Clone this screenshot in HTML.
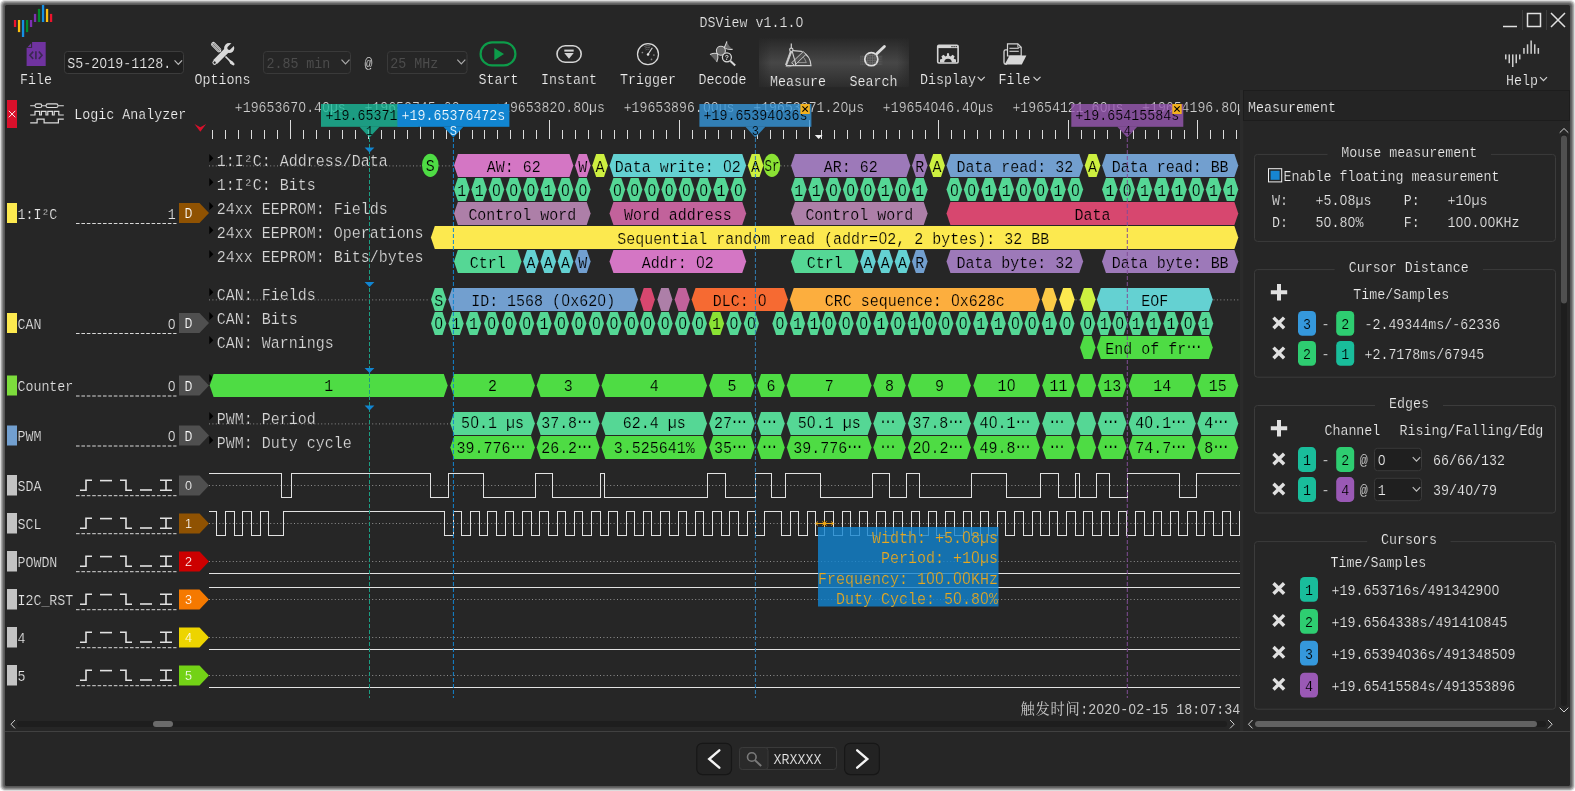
<!DOCTYPE html>
<html lang="en">
<head>
<meta charset="utf-8">
<title>DSView v1.1.0</title>
<style>
html,body{margin:0;padding:0;background:#ffffff;}
body{width:1575px;height:791px;overflow:hidden;position:relative;font-family:"Liberation Mono","DejaVu Sans Mono",monospace;}
#win{position:absolute;left:5px;top:5px;width:1565px;height:781px;background:#262626;border-radius:1.5px;
box-shadow:0 0 0 1px #575757,0 0 0 2px #666666,0 0 0 3px #868686,0 0 0 4px #a8a8a8,0 0 0 5px #dcdcdc;}
svg{position:absolute;left:0;top:0;will-change:transform;font-family:"Liberation Mono","DejaVu Sans Mono",monospace;}
text{white-space:pre;}
</style>
</head>
<body>
<div id="win"></div>
<svg width="1575" height="791" viewBox="0 0 1575 791">
<g id="titlebar">
<rect x="13.90" y="20.00" width="2.30" height="7.00" fill="#ed142d"/>
<rect x="17.90" y="20.00" width="2.30" height="12.10" fill="#fdc00f"/>
<rect x="21.90" y="20.00" width="2.30" height="17.00" fill="#1690e3"/>
<rect x="25.90" y="20.00" width="2.30" height="12.10" fill="#018c2c"/>
<rect x="29.90" y="20.00" width="2.30" height="7.00" fill="#7c31b2"/>
<rect x="33.90" y="13.90" width="2.30" height="8.10" fill="#7c31b2"/>
<rect x="37.90" y="8.90" width="2.30" height="13.10" fill="#018c2c"/>
<rect x="41.90" y="5.00" width="2.30" height="17.00" fill="#1690e3"/>
<rect x="45.90" y="8.90" width="2.30" height="13.10" fill="#fdc00f"/>
<rect x="49.90" y="13.90" width="2.30" height="8.10" fill="#ed142d"/>
<text transform="translate(751.50,26.92) scale(1,1.12)" font-size="13.33" fill="#e8e8e8" stroke="#262626" stroke-width="0.2"><tspan x="-52.00">D</tspan>SView v1.1.<tspan font-family="'Liberation Sans',sans-serif" x="44.29">0</tspan></text>
<line x1="1503.00" y1="26.50" x2="1517.00" y2="26.50" stroke="#e0e0e0" stroke-width="1.5"/>
<line x1="1522.50" y1="10.00" x2="1522.50" y2="30.00" stroke="#3c3c3c" stroke-width="1"/>
<rect x="1527.50" y="13.50" width="13.00" height="13.00" fill="none" stroke="#e0e0e0" stroke-width="1.5"/>
<line x1="1546.50" y1="10.00" x2="1546.50" y2="30.00" stroke="#3c3c3c" stroke-width="1"/>
<path d="M1551,13 L1565,27 M1565,13 L1551,27" fill="none" stroke="#e0e0e0" stroke-width="1.5"/>
</g>
<g id="toolbar">
<defs><linearGradient id="pg" x1="0" y1="0" x2="0" y2="1"><stop offset="0" stop-color="#282828"/><stop offset="0.5" stop-color="#474747"/><stop offset="1" stop-color="#2c2c2c"/></linearGradient></defs>
<rect x="759.00" y="38.20" width="150.00" height="49.00" fill="url(#pg)"/>
<linearGradient id="pg2" x1="0" y1="0" x2="1" y2="0"><stop offset="0" stop-color="#262626" stop-opacity="0.55"/><stop offset="0.08" stop-color="#262626" stop-opacity="0"/><stop offset="0.92" stop-color="#262626" stop-opacity="0"/><stop offset="1" stop-color="#262626" stop-opacity="0.55"/></linearGradient>
<rect x="759.00" y="38.00" width="150.00" height="50.00" fill="url(#pg2)"/>
<path d="M32.1,42 L45.7,42 L45.7,66 L26.6,66 L26.6,47.8 L32.1,47.8 Z" fill="#7033a0"/>
<path d="M31.2,43.3 L31.2,46.9 L27.7,46.9 Z" fill="#7033a0"/>
<path d="M33.2,51.6 L29.9,55.3 L33.2,58.9 M38.8,51.6 L42,55.3 L38.8,58.9 M35.9,51.2 L35.9,59.2" fill="none" stroke="#3a2850" stroke-width="1.6"/>
<text transform="translate(36.00,84.22) scale(1,1.12)" font-size="13.33" fill="#f0f0f0" text-anchor="middle" stroke="#262626" stroke-width="0.2">File</text>
<rect x="64.50" y="51.50" width="119.00" height="22.00" fill="#1f1f1f" rx="3" stroke="#3c3c3c" stroke-width="1"/>
<text transform="translate(67.30,68.32) scale(1,1.12)" font-size="13.33" fill="#f0f0f0" stroke="#1f1f1f" stroke-width="0.2">S5-2<tspan font-family="'Liberation Sans',sans-serif" x="32.29">0</tspan><tspan x="40.00">1</tspan>9-1128.</text>
<path d="M174.55,60.30 L178.30,64.30 L182.05,60.30" fill="none" stroke="#bbb" stroke-width="1.2"/>
<g transform="translate(223.1,54.1)" fill="#d9d9d9" stroke="none">
<g transform="rotate(-45)"><rect x="-2.3" y="-16" width="4.6" height="12.4" rx="2"/><path d="M-1.15,-14.6 V-4.6 M0,-15 V-4.6 M1.15,-14.6 V-4.6" stroke="#3a3a3a" stroke-width="0.55" fill="none"/><rect x="-0.8" y="-4" width="1.6" height="15"/><path d="M-0.8,9.6 L-1.6,11.6 L-1.3,14.2 L-0.6,15.6 L0.6,15.6 L1.3,14.2 L1.6,11.6 L0.8,9.6 Z"/></g>
<g transform="rotate(45)"><path d="M-2.8,-5 V12 A2.8,2.8 0 0 0 2.8,12 V-5 Z" stroke="#262626" stroke-width="1.2"/><circle cx="0" cy="-8.6" r="5.1"/><path d="M-2.8,-5 V11 H2.8 V-5 Z"/><path d="M-1.9,-15 V-8.6 A1.9,1.9 0 0 0 1.9,-8.6 V-15 Z" fill="#262626"/><circle cx="0" cy="12" r="1.15" fill="#262626"/></g>
</g>
<text transform="translate(222.50,84.22) scale(1,1.12)" font-size="13.33" fill="#f0f0f0" text-anchor="middle" stroke="#262626" stroke-width="0.2">Options</text>
<rect x="263.50" y="51.50" width="87.00" height="22.00" fill="none" rx="3" stroke="#3a3a3a" stroke-width="1"/>
<text transform="translate(266.40,68.32) scale(1,1.12)" font-size="13.33" fill="#4c4c4c">2.85 min</text>
<path d="M341.50,59.70 L345.50,63.90 L349.50,59.70" fill="none" stroke="#aaa" stroke-width="1.2"/>
<text transform="translate(368.50,68.32) scale(1,1.12)" font-size="13.33" fill="#f0f0f0" text-anchor="middle" stroke="#262626" stroke-width="0.2">@</text>
<rect x="387.50" y="51.50" width="79.50" height="22.00" fill="none" rx="3" stroke="#3a3a3a" stroke-width="1"/>
<text transform="translate(390.30,68.32) scale(1,1.12)" font-size="13.33" fill="#4c4c4c">25 MHz</text>
<path d="M457.30,59.70 L461.30,63.90 L465.30,59.70" fill="none" stroke="#aaa" stroke-width="1.2"/>
<rect x="480.60" y="42.40" width="34.80" height="23.00" fill="none" rx="11.5" stroke="#0d9c4a" stroke-width="2.2"/>
<path d="M494.3,48 L504,54 L494.3,60.3 Z" fill="#0d9c4a"/>
<text transform="translate(498.50,84.22) scale(1,1.12)" font-size="13.33" fill="#f0f0f0" text-anchor="middle" stroke="#262626" stroke-width="0.2">Start</text>
<rect x="557.00" y="45.80" width="24.20" height="16.40" fill="none" rx="8.2" stroke="#d4d4d4" stroke-width="1.6"/>
<path d="M564.3,53 L573.7,53 L569,58.7 Z" fill="#d4d4d4"/>
<rect x="564.30" y="49.60" width="9.40" height="2.00" fill="#d4d4d4"/>
<text transform="translate(569.00,84.22) scale(1,1.12)" font-size="13.33" fill="#f0f0f0" text-anchor="middle" stroke="#262626" stroke-width="0.2">Instant</text>
<g stroke="#d8d8d8" fill="none">
<circle cx="648" cy="54.2" r="10.5" stroke-width="1.25"/>
<path d="M644.2,46.4 A8.6,8.6 0 0 1 650.6,46" stroke-width="0.7" stroke="#8a8a8a"/>
<path d="M644.8,48.2 A6.8,6.8 0 0 1 650,47.7" stroke-width="0.7" stroke="#7a7a7a"/>
<path d="M645.4,50 A5,5 0 0 1 649.3,49.4" stroke-width="0.7" stroke="#6a6a6a"/>
<path d="M648.1,54.3 L652.3,47.7" stroke-width="1.2"/>
</g>
<circle cx="648" cy="54.4" r="1.25" fill="#e4e4e4"/>
<circle cx="642.4" cy="52.5" r="0.85" fill="#8c8c8c"/>
<circle cx="653.9" cy="55" r="0.85" fill="#8c8c8c"/>
<circle cx="651.5" cy="59.4" r="0.85" fill="#8c8c8c"/>
<text transform="translate(648.00,84.22) scale(1,1.12)" font-size="13.33" fill="#f0f0f0" text-anchor="middle" stroke="#262626" stroke-width="0.2">Trigger</text>
<path d="M710,54.4 Q714.5,52.6 717.6,53.8 Q718.6,58.5 716.7,62 Z" fill="#d0d0d0" fill-opacity="0.38"/>
<path d="M726.9,41.3 Q725.6,45.2 724.2,47.6 Q728.2,50.2 732.7,49.3 Q728.6,46.6 726.9,41.3 Z" fill="#d0d0d0" fill-opacity="0.38"/>
<circle cx="720.9" cy="50.7" r="4.5" fill="#d0d0d0" fill-opacity="0.38" stroke="#d4d4d4" stroke-width="1.1"/>
<path d="M710,54.4 Q714.5,52.6 717.6,53.8 Q718.6,58.5 716.7,62" fill="none" stroke="#d4d4d4" stroke-width="1.1"/>
<path d="M726.9,41.3 Q725.6,45.2 724.2,47.6 Q728.2,50.2 732.7,49.3" fill="none" stroke="#d4d4d4" stroke-width="1.1"/>
<circle cx="726.9" cy="57.3" r="4.5" fill="#262626" stroke="#d8d8d8" stroke-width="1.3"/>
<line x1="730.40" y1="61.00" x2="735.20" y2="65.40" stroke="#d8d8d8" stroke-width="2"/>
<text transform="translate(726.90,59.74) scale(1,1)" font-size="6.8" fill="#d8d8d8" text-anchor="middle" font-family="'Liberation Sans','DejaVu Sans',sans-serif" font-weight="bold">?</text>
<text transform="translate(722.50,84.22) scale(1,1.12)" font-size="13.33" fill="#f0f0f0" text-anchor="middle" stroke="#262626" stroke-width="0.2">Decode</text>
<g stroke="#cfcfcf" fill="none" stroke-width="1">
<path d="M786,65.6 L811,65.6 A16.6,16.6 0 0 0 801.6,51.4 L793,50.6" stroke-width="1.1"/>
<path d="M797.5,62.6 L806.3,62.6 A11,11 0 0 0 801.2,55.6" stroke-width="0.8" stroke="#a8a8a8"/>
<path d="M791.6,62.8 L803.2,51.6 L806,54.4 L794.6,65.4 Z" fill="#505050" stroke-width="0.9"/>
<path d="M792.2,51.4 L796,64.6" stroke-width="1.1"/>
<path d="M790.4,51 L791.9,51.4 L786.6,65.2 L785.5,64.8 Z" fill="#cfcfcf" stroke-width="0.8"/>
<path d="M791.3,43.6 L791.3,48" stroke-width="1.2"/>
<circle cx="791.3" cy="49.8" r="1.7" fill="#3c3c3c" stroke-width="1.1"/>
<path d="M785.6,66.3 Q788.5,67.4 791.5,66.3" stroke-width="0.8" stroke="#9a9a9a"/>
</g>
<text transform="translate(798.00,86.22) scale(1,1.12)" font-size="13.33" fill="#f0f0f0" text-anchor="middle" stroke="#333333" stroke-width="0.2">Measure</text>
<g>
<rect x="860.00" y="55.70" width="22.20" height="9.30" fill="#555555"/>
<line x1="861.20" y1="55.70" x2="861.20" y2="65.00" stroke="#484848" stroke-width="0.8"/>
<line x1="863.70" y1="55.70" x2="863.70" y2="65.00" stroke="#484848" stroke-width="0.8"/>
<line x1="866.20" y1="55.70" x2="866.20" y2="65.00" stroke="#484848" stroke-width="0.8"/>
<line x1="868.70" y1="55.70" x2="868.70" y2="65.00" stroke="#484848" stroke-width="0.8"/>
<line x1="871.20" y1="55.70" x2="871.20" y2="65.00" stroke="#484848" stroke-width="0.8"/>
<line x1="873.70" y1="55.70" x2="873.70" y2="65.00" stroke="#484848" stroke-width="0.8"/>
<line x1="876.20" y1="55.70" x2="876.20" y2="65.00" stroke="#484848" stroke-width="0.8"/>
<line x1="878.70" y1="55.70" x2="878.70" y2="65.00" stroke="#484848" stroke-width="0.8"/>
<line x1="881.20" y1="55.70" x2="881.20" y2="65.00" stroke="#484848" stroke-width="0.8"/>
<line x1="860.00" y1="58.00" x2="882.20" y2="58.00" stroke="#484848" stroke-width="0.8"/>
<line x1="860.00" y1="60.40" x2="882.20" y2="60.40" stroke="#484848" stroke-width="0.8"/>
<line x1="860.00" y1="62.80" x2="882.20" y2="62.80" stroke="#484848" stroke-width="0.8"/>
<circle cx="871.3" cy="59.2" r="6.5" fill="#4a4a4a" stroke="#dcdcdc" stroke-width="1.8"/>
<line x1="867.70" y1="54.40" x2="867.70" y2="64.00" stroke="#6e6e6e" stroke-width="0.8"/>
<line x1="866.40" y1="55.60" x2="876.20" y2="55.60" stroke="#6e6e6e" stroke-width="0.8"/>
<line x1="870.10" y1="54.40" x2="870.10" y2="64.00" stroke="#6e6e6e" stroke-width="0.8"/>
<line x1="866.40" y1="58.00" x2="876.20" y2="58.00" stroke="#6e6e6e" stroke-width="0.8"/>
<line x1="872.50" y1="54.40" x2="872.50" y2="64.00" stroke="#6e6e6e" stroke-width="0.8"/>
<line x1="866.40" y1="60.40" x2="876.20" y2="60.40" stroke="#6e6e6e" stroke-width="0.8"/>
<line x1="874.90" y1="54.40" x2="874.90" y2="64.00" stroke="#6e6e6e" stroke-width="0.8"/>
<line x1="866.40" y1="62.80" x2="876.20" y2="62.80" stroke="#6e6e6e" stroke-width="0.8"/>
<line x1="876.8" y1="53.8" x2="884.4" y2="46.5" stroke="#dcdcdc" stroke-width="2.9" stroke-linecap="round"/>
</g>
<text transform="translate(873.50,86.22) scale(1,1.12)" font-size="13.33" fill="#f0f0f0" text-anchor="middle" stroke="#333333" stroke-width="0.2">Search</text>
<rect x="937.70" y="45.20" width="20.40" height="17.80" fill="none" rx="1.2" stroke="#d4d4d4" stroke-width="1.6"/>
<rect x="938.00" y="45.20" width="20.00" height="2.90" fill="#d4d4d4"/>
<rect x="951.40" y="46.00" width="1.20" height="1.20" fill="#262626"/>
<rect x="953.50" y="46.00" width="1.20" height="1.20" fill="#262626"/>
<rect x="955.60" y="46.00" width="1.20" height="1.20" fill="#262626"/>
<g fill="#d4d4d4">
<path d="M940,62.5 L940,59.5 L942.3,58.8 L941.4,56.2 L943.6,54.7 L945.4,56.4 L946.9,55.7 L947,53.2 L949,53.2 L949.2,55.7 L950.7,56.4 L952.5,54.7 L954.6,56.2 L953.7,58.8 L956,59.5 L956,62.5 L951.8,62.5 A3.8,3.8 0 0 0 944.2,62.5 Z"/>
</g>
<text transform="translate(948.00,84.42) scale(1,1.12)" font-size="13.33" fill="#f0f0f0" text-anchor="middle" stroke="#262626" stroke-width="0.2">Display</text>
<path d="M977.70,76.90 L981.20,80.50 L984.70,76.90" fill="none" stroke="#d0d0d0" stroke-width="1.2"/>
<g>
<path d="M1007.5,43.8 L1017.8,43.8 L1021.2,47.3 L1021.2,56 L1007.5,56 Z" fill="#262626" stroke="#d4d4d4" stroke-width="1.2"/>
<path d="M1017.8,43.8 L1017.8,47.3 L1021.2,47.3" fill="none" stroke="#d4d4d4" stroke-width="0.9"/>
<line x1="1009.40" y1="48.30" x2="1018.80" y2="48.30" stroke="#d4d4d4" stroke-width="1.1"/>
<line x1="1009.40" y1="51.30" x2="1018.80" y2="51.30" stroke="#d4d4d4" stroke-width="1.1"/>
<path d="M1007.3,49.9 H1005.6 Q1004,49.9 1004,51.5 V62.6 Q1004,64.2 1005.6,64.2 H1007" fill="none" stroke="#d4d4d4" stroke-width="1.3"/>
<path d="M1009.6,55.4 L1026.4,55.4 L1021.8,64.4 L1004.6,64.4 Z" fill="#d8d8d8"/>
</g>
<text transform="translate(1014.40,84.22) scale(1,1.12)" font-size="13.33" fill="#f0f0f0" text-anchor="middle" stroke="#262626" stroke-width="0.2">File</text>
<path d="M1033.50,76.90 L1037.00,80.50 L1040.50,76.90" fill="none" stroke="#d0d0d0" stroke-width="1.2"/>
<rect x="1505.00" y="54.40" width="1.50" height="5.00" fill="#cfcfcf"/>
<rect x="1508.50" y="54.40" width="1.50" height="8.80" fill="#cfcfcf"/>
<rect x="1512.00" y="54.40" width="1.50" height="12.60" fill="#cfcfcf"/>
<rect x="1515.50" y="54.40" width="1.50" height="8.80" fill="#cfcfcf"/>
<rect x="1519.00" y="54.40" width="1.50" height="5.00" fill="#cfcfcf"/>
<rect x="1523.20" y="48.00" width="1.50" height="5.80" fill="#cfcfcf"/>
<rect x="1526.80" y="44.30" width="1.50" height="9.50" fill="#cfcfcf"/>
<rect x="1530.40" y="40.50" width="1.50" height="13.30" fill="#cfcfcf"/>
<rect x="1534.00" y="44.30" width="1.50" height="9.50" fill="#cfcfcf"/>
<rect x="1537.60" y="48.00" width="1.50" height="5.80" fill="#cfcfcf"/>
<text transform="translate(1522.00,84.52) scale(1,1.12)" font-size="13.33" fill="#f0f0f0" text-anchor="middle" stroke="#262626" stroke-width="0.2">Help</text>
<path d="M1540.00,77.10 L1543.50,80.70 L1547.00,77.10" fill="none" stroke="#d0d0d0" stroke-width="1.2"/>
</g>
<g id="header">
<rect x="7.00" y="100.00" width="10.00" height="28.00" fill="#d8102b"/>
<path d="M8.8,110.8 L15.3,117.3 M15.3,110.8 L8.8,117.3" fill="none" stroke="#ffffff" stroke-width="0.9"/>
<g stroke="#dcdcdc" fill="none" stroke-width="1.1">
<path d="M30.2,105.7 L35,105.7 M41.8,105.7 L46,105.7 M58,105.7 L63.8,105.7"/>
<rect x="35" y="103.9" width="6.8" height="3.6" rx="1.8"/>
<rect x="46" y="103.9" width="12" height="3.6" rx="1.8"/>
<path d="M30.2,115 H35 V111.3 H39.6 V115 H41.4 V111.3 H46 V115 H47.8 V111.3 H52.4 V115 H54.2 V111.3 H58.8 V115 H63.8" stroke-width="1.2"/>
<path d="M30.2,122.9 H37.1 V119.1 H44.1 V122.9 H58.4 V119.1 H63.8" stroke-width="1.2"/>
</g>
<text transform="translate(74.30,119.12) scale(1,1.12)" font-size="13.33" fill="#f0f0f0" stroke="#262626" stroke-width="0.2">Logic Analyzer</text>
<path d="M194.5,124 L200.3,127.3 L206.2,124 L200.3,131.8 Z" fill="#d8102b"/>
<rect x="7.00" y="203.00" width="10.00" height="20.00" fill="#fce94f"/>
<text transform="translate(17.40,218.92) scale(1,1.12)" font-size="13.33" fill="#e4e4e4" stroke="#262626" stroke-width="0.2">1:I²C</text>
<text transform="translate(175.80,218.92) scale(1,1.12)" font-size="13.33" fill="#e4e4e4" text-anchor="end" stroke="#262626" stroke-width="0.2">1</text>
<line x1="76.00" y1="223.50" x2="176.50" y2="223.50" stroke="#d8d8d8" stroke-width="1" stroke-dasharray="3.6 1.8"/>
<path d="M179,203 L199.5,203 L209,213 L199.5,223 L179,223 Z" fill="#8f5202"/>
<text transform="translate(188.60,218.13) scale(1,1.1)" font-size="13.33" fill="#ffffff" text-anchor="middle" font-family="'Liberation Mono','DejaVu Sans Mono',monospace" stroke="#8f5202" stroke-width="0.2">D</text>
<rect x="7.00" y="313.00" width="10.00" height="20.00" fill="#fce94f"/>
<text transform="translate(17.40,328.92) scale(1,1.12)" font-size="13.33" fill="#e4e4e4" stroke="#262626" stroke-width="0.2">CAN</text>
<text transform="translate(175.80,328.92) scale(1,1.12)" font-size="13.33" fill="#e4e4e4" stroke="#262626" stroke-width="0.2"><tspan font-family="'Liberation Sans',sans-serif" x="-7.71">0</tspan></text>
<line x1="76.00" y1="333.50" x2="176.50" y2="333.50" stroke="#d8d8d8" stroke-width="1" stroke-dasharray="3.6 1.8"/>
<path d="M179,313 L199.5,313 L209,323 L199.5,333 L179,333 Z" fill="#4f4f4f"/>
<text transform="translate(188.60,328.13) scale(1,1.1)" font-size="13.33" fill="#ffffff" text-anchor="middle" font-family="'Liberation Mono','DejaVu Sans Mono',monospace" stroke="#4f4f4f" stroke-width="0.2">D</text>
<rect x="7.00" y="375.50" width="10.00" height="20.00" fill="#7ddc3c"/>
<text transform="translate(17.40,391.42) scale(1,1.12)" font-size="13.33" fill="#e4e4e4" stroke="#262626" stroke-width="0.2">Counter</text>
<text transform="translate(175.80,391.42) scale(1,1.12)" font-size="13.33" fill="#e4e4e4" stroke="#262626" stroke-width="0.2"><tspan font-family="'Liberation Sans',sans-serif" x="-7.71">0</tspan></text>
<line x1="76.00" y1="396.00" x2="176.50" y2="396.00" stroke="#d8d8d8" stroke-width="1" stroke-dasharray="3.6 1.8"/>
<path d="M179,375.5 L199.5,375.5 L209,385.5 L199.5,395.5 L179,395.5 Z" fill="#4f4f4f"/>
<text transform="translate(188.60,390.63) scale(1,1.1)" font-size="13.33" fill="#ffffff" text-anchor="middle" font-family="'Liberation Mono','DejaVu Sans Mono',monospace" stroke="#4f4f4f" stroke-width="0.2">D</text>
<rect x="7.00" y="425.50" width="10.00" height="20.00" fill="#729fcf"/>
<text transform="translate(17.40,441.42) scale(1,1.12)" font-size="13.33" fill="#e4e4e4" stroke="#262626" stroke-width="0.2">PWM</text>
<text transform="translate(175.80,441.42) scale(1,1.12)" font-size="13.33" fill="#e4e4e4" stroke="#262626" stroke-width="0.2"><tspan font-family="'Liberation Sans',sans-serif" x="-7.71">0</tspan></text>
<line x1="76.00" y1="446.00" x2="176.50" y2="446.00" stroke="#d8d8d8" stroke-width="1" stroke-dasharray="3.6 1.8"/>
<path d="M179,425.5 L199.5,425.5 L209,435.5 L199.5,445.5 L179,445.5 Z" fill="#4f4f4f"/>
<text transform="translate(188.60,440.63) scale(1,1.1)" font-size="13.33" fill="#ffffff" text-anchor="middle" font-family="'Liberation Mono','DejaVu Sans Mono',monospace" stroke="#4f4f4f" stroke-width="0.2">D</text>
<rect x="7.00" y="475.00" width="10.00" height="20.50" fill="#c3c3c3"/>
<text transform="translate(17.40,491.42) scale(1,1.12)" font-size="13.33" fill="#e4e4e4" stroke="#262626" stroke-width="0.2">SDA</text>
<path d="M80,490.3 L86,490.3 L86,480.3 L92,480.3" fill="none" stroke="#e2e2e2" stroke-width="1.6"/>
<path d="M100,480.6 L112,480.6" fill="none" stroke="#e2e2e2" stroke-width="1.6"/>
<path d="M120,480.3 L126,480.3 L126,490.3 L132,490.3" fill="none" stroke="#e2e2e2" stroke-width="1.6"/>
<path d="M140,490.0 L152,490.0" fill="none" stroke="#e2e2e2" stroke-width="1.6"/>
<path d="M160,480.3 L172,480.3 M160,490.3 L172,490.3 M166,480.3 L166,490.3" fill="none" stroke="#e2e2e2" stroke-width="1.6"/>
<line x1="76.00" y1="495.70" x2="176.50" y2="495.70" stroke="#d8d8d8" stroke-width="1" stroke-dasharray="3.6 1.8"/>
<path d="M179,475.5 L199.5,475.5 L209,485.5 L199.5,495.5 L179,495.5 Z" fill="#4f4f4f"/>
<text transform="translate(188.60,490.12) scale(1,1.04)" font-size="12.6" fill="#ffffff" text-anchor="middle" font-family="'Liberation Sans','DejaVu Sans',sans-serif" stroke="#4f4f4f" stroke-width="0.2">0</text>
<rect x="7.00" y="513.00" width="10.00" height="20.50" fill="#c3c3c3"/>
<text transform="translate(17.40,529.42) scale(1,1.12)" font-size="13.33" fill="#e4e4e4" stroke="#262626" stroke-width="0.2">SCL</text>
<path d="M80,528.3 L86,528.3 L86,518.3 L92,518.3" fill="none" stroke="#e2e2e2" stroke-width="1.6"/>
<path d="M100,518.5999999999999 L112,518.5999999999999" fill="none" stroke="#e2e2e2" stroke-width="1.6"/>
<path d="M120,518.3 L126,518.3 L126,528.3 L132,528.3" fill="none" stroke="#e2e2e2" stroke-width="1.6"/>
<path d="M140,528.0 L152,528.0" fill="none" stroke="#e2e2e2" stroke-width="1.6"/>
<path d="M160,518.3 L172,518.3 M160,528.3 L172,528.3 M166,518.3 L166,528.3" fill="none" stroke="#e2e2e2" stroke-width="1.6"/>
<line x1="76.00" y1="533.70" x2="176.50" y2="533.70" stroke="#d8d8d8" stroke-width="1" stroke-dasharray="3.6 1.8"/>
<path d="M179,513.5 L199.5,513.5 L209,523.5 L199.5,533.5 L179,533.5 Z" fill="#8f5202"/>
<text transform="translate(188.60,528.12) scale(1,1.04)" font-size="12.6" fill="#ffffff" text-anchor="middle" font-family="'Liberation Sans','DejaVu Sans',sans-serif" stroke="#8f5202" stroke-width="0.2">1</text>
<rect x="7.00" y="551.00" width="10.00" height="20.50" fill="#c3c3c3"/>
<text transform="translate(17.40,567.42) scale(1,1.12)" font-size="13.33" fill="#e4e4e4" stroke="#262626" stroke-width="0.2">POWDN</text>
<path d="M80,566.3 L86,566.3 L86,556.3 L92,556.3" fill="none" stroke="#e2e2e2" stroke-width="1.6"/>
<path d="M100,556.5999999999999 L112,556.5999999999999" fill="none" stroke="#e2e2e2" stroke-width="1.6"/>
<path d="M120,556.3 L126,556.3 L126,566.3 L132,566.3" fill="none" stroke="#e2e2e2" stroke-width="1.6"/>
<path d="M140,566.0 L152,566.0" fill="none" stroke="#e2e2e2" stroke-width="1.6"/>
<path d="M160,556.3 L172,556.3 M160,566.3 L172,566.3 M166,556.3 L166,566.3" fill="none" stroke="#e2e2e2" stroke-width="1.6"/>
<line x1="76.00" y1="571.70" x2="176.50" y2="571.70" stroke="#d8d8d8" stroke-width="1" stroke-dasharray="3.6 1.8"/>
<path d="M179,551.5 L199.5,551.5 L209,561.5 L199.5,571.5 L179,571.5 Z" fill="#cc0000"/>
<text transform="translate(188.60,566.12) scale(1,1.04)" font-size="12.6" fill="#ffffff" text-anchor="middle" font-family="'Liberation Sans','DejaVu Sans',sans-serif" stroke="#cc0000" stroke-width="0.2">2</text>
<rect x="7.00" y="589.00" width="10.00" height="20.50" fill="#c3c3c3"/>
<text transform="translate(17.40,605.42) scale(1,1.12)" font-size="13.33" fill="#e4e4e4" stroke="#262626" stroke-width="0.2">I2C_RST</text>
<path d="M80,604.3 L86,604.3 L86,594.3 L92,594.3" fill="none" stroke="#e2e2e2" stroke-width="1.6"/>
<path d="M100,594.5999999999999 L112,594.5999999999999" fill="none" stroke="#e2e2e2" stroke-width="1.6"/>
<path d="M120,594.3 L126,594.3 L126,604.3 L132,604.3" fill="none" stroke="#e2e2e2" stroke-width="1.6"/>
<path d="M140,604.0 L152,604.0" fill="none" stroke="#e2e2e2" stroke-width="1.6"/>
<path d="M160,594.3 L172,594.3 M160,604.3 L172,604.3 M166,594.3 L166,604.3" fill="none" stroke="#e2e2e2" stroke-width="1.6"/>
<line x1="76.00" y1="609.70" x2="176.50" y2="609.70" stroke="#d8d8d8" stroke-width="1" stroke-dasharray="3.6 1.8"/>
<path d="M179,589.5 L199.5,589.5 L209,599.5 L199.5,609.5 L179,609.5 Z" fill="#f57900"/>
<text transform="translate(188.60,604.12) scale(1,1.04)" font-size="12.6" fill="#ffffff" text-anchor="middle" font-family="'Liberation Sans','DejaVu Sans',sans-serif" stroke="#f57900" stroke-width="0.2">3</text>
<rect x="7.00" y="627.00" width="10.00" height="20.50" fill="#c3c3c3"/>
<text transform="translate(17.40,643.42) scale(1,1.12)" font-size="13.33" fill="#e4e4e4" stroke="#262626" stroke-width="0.2">4</text>
<path d="M80,642.3 L86,642.3 L86,632.3 L92,632.3" fill="none" stroke="#e2e2e2" stroke-width="1.6"/>
<path d="M100,632.5999999999999 L112,632.5999999999999" fill="none" stroke="#e2e2e2" stroke-width="1.6"/>
<path d="M120,632.3 L126,632.3 L126,642.3 L132,642.3" fill="none" stroke="#e2e2e2" stroke-width="1.6"/>
<path d="M140,642.0 L152,642.0" fill="none" stroke="#e2e2e2" stroke-width="1.6"/>
<path d="M160,632.3 L172,632.3 M160,642.3 L172,642.3 M166,632.3 L166,642.3" fill="none" stroke="#e2e2e2" stroke-width="1.6"/>
<line x1="76.00" y1="647.70" x2="176.50" y2="647.70" stroke="#d8d8d8" stroke-width="1" stroke-dasharray="3.6 1.8"/>
<path d="M179,627.5 L199.5,627.5 L209,637.5 L199.5,647.5 L179,647.5 Z" fill="#edd400"/>
<text transform="translate(188.60,642.12) scale(1,1.04)" font-size="12.6" fill="#ffffff" text-anchor="middle" font-family="'Liberation Sans','DejaVu Sans',sans-serif" stroke="#edd400" stroke-width="0.2">4</text>
<rect x="7.00" y="665.00" width="10.00" height="20.50" fill="#c3c3c3"/>
<text transform="translate(17.40,681.42) scale(1,1.12)" font-size="13.33" fill="#e4e4e4" stroke="#262626" stroke-width="0.2">5</text>
<path d="M80,680.3 L86,680.3 L86,670.3 L92,670.3" fill="none" stroke="#e2e2e2" stroke-width="1.6"/>
<path d="M100,670.5999999999999 L112,670.5999999999999" fill="none" stroke="#e2e2e2" stroke-width="1.6"/>
<path d="M120,670.3 L126,670.3 L126,680.3 L132,680.3" fill="none" stroke="#e2e2e2" stroke-width="1.6"/>
<path d="M140,680.0 L152,680.0" fill="none" stroke="#e2e2e2" stroke-width="1.6"/>
<path d="M160,670.3 L172,670.3 M160,680.3 L172,680.3 M166,670.3 L166,680.3" fill="none" stroke="#e2e2e2" stroke-width="1.6"/>
<line x1="76.00" y1="685.70" x2="176.50" y2="685.70" stroke="#d8d8d8" stroke-width="1" stroke-dasharray="3.6 1.8"/>
<path d="M179,665.5 L199.5,665.5 L209,675.5 L199.5,685.5 L179,685.5 Z" fill="#73d216"/>
<text transform="translate(188.60,680.12) scale(1,1.04)" font-size="12.6" fill="#ffffff" text-anchor="middle" font-family="'Liberation Sans','DejaVu Sans',sans-serif" stroke="#73d216" stroke-width="0.2">5</text>
</g>
<g id="view">
<g id="ruler">
<clipPath id="vclip"><rect x="209.0" y="92" width="1030.6" height="610"/></clipPath>
<g clip-path="url(#vclip)">
<text transform="translate(290.30,112.00) scale(1,1.08)" font-size="13.2" fill="#cfcfcf" stroke="#262626" stroke-width="0.2"><tspan x="-55.45">+</tspan>1965367<tspan font-family="'Liberation Sans',sans-serif" x="8.21">0</tspan><tspan x="15.84">.</tspan>4<tspan font-family="'Liberation Sans',sans-serif" x="31.98">0</tspan><tspan x="39.61">µ</tspan>s</text>
<text transform="translate(419.90,112.00) scale(1,1.08)" font-size="13.2" fill="#cfcfcf" stroke="#262626" stroke-width="0.2"><tspan x="-55.45">+</tspan>19653745.6<tspan font-family="'Liberation Sans',sans-serif" x="31.98">0</tspan><tspan x="39.61">µ</tspan>s</text>
<text transform="translate(549.50,112.00) scale(1,1.08)" font-size="13.2" fill="#cfcfcf" stroke="#262626" stroke-width="0.2"><tspan x="-55.45">+</tspan>1965382<tspan font-family="'Liberation Sans',sans-serif" x="8.21">0</tspan><tspan x="15.84">.</tspan>8<tspan font-family="'Liberation Sans',sans-serif" x="31.98">0</tspan><tspan x="39.61">µ</tspan>s</text>
<text transform="translate(679.10,112.00) scale(1,1.08)" font-size="13.2" fill="#cfcfcf" stroke="#262626" stroke-width="0.2"><tspan x="-55.45">+</tspan>19653896.<tspan font-family="'Liberation Sans',sans-serif" x="24.05">0</tspan><tspan font-family="'Liberation Sans',sans-serif" x="31.98">0</tspan><tspan x="39.61">µ</tspan>s</text>
<text transform="translate(808.70,112.00) scale(1,1.08)" font-size="13.2" fill="#cfcfcf" stroke="#262626" stroke-width="0.2"><tspan x="-55.45">+</tspan>19653971.2<tspan font-family="'Liberation Sans',sans-serif" x="31.98">0</tspan><tspan x="39.61">µ</tspan>s</text>
<text transform="translate(938.30,112.00) scale(1,1.08)" font-size="13.2" fill="#cfcfcf" stroke="#262626" stroke-width="0.2"><tspan x="-55.45">+</tspan>19654<tspan font-family="'Liberation Sans',sans-serif" x="-7.63">0</tspan><tspan x="0.00">4</tspan>6.4<tspan font-family="'Liberation Sans',sans-serif" x="31.98">0</tspan><tspan x="39.61">µ</tspan>s</text>
<text transform="translate(1067.90,112.00) scale(1,1.08)" font-size="13.2" fill="#cfcfcf" stroke="#262626" stroke-width="0.2"><tspan x="-55.45">+</tspan>19654121.6<tspan font-family="'Liberation Sans',sans-serif" x="31.98">0</tspan><tspan x="39.61">µ</tspan>s</text>
<text transform="translate(1197.50,112.00) scale(1,1.08)" font-size="13.2" fill="#cfcfcf" stroke="#262626" stroke-width="0.2"><tspan x="-55.45">+</tspan>19654196.8<tspan font-family="'Liberation Sans',sans-serif" x="31.98">0</tspan><tspan x="39.61">µ</tspan>s</text>
<path d="M212.5,129.5 V138.5 M225.5,129.5 V138.5 M238.5,129.5 V138.5 M251.5,129.5 V138.5 M264.5,129.5 V138.5 M277.5,129.5 V138.5 M290.5,119.5 V138.5 M303.5,129.5 V138.5 M316.5,129.5 V138.5 M329.5,129.5 V138.5 M342.5,129.5 V138.5 M355.5,129.5 V138.5 M368.5,129.5 V138.5 M381.5,129.5 V138.5 M394.5,129.5 V138.5 M407.5,129.5 V138.5 M420.5,119.5 V138.5 M433.5,129.5 V138.5 M446.5,129.5 V138.5 M459.5,129.5 V138.5 M472.5,129.5 V138.5 M484.5,129.5 V138.5 M497.5,129.5 V138.5 M510.5,129.5 V138.5 M523.5,129.5 V138.5 M536.5,129.5 V138.5 M549.5,119.5 V138.5 M562.5,129.5 V138.5 M575.5,129.5 V138.5 M588.5,129.5 V138.5 M601.5,129.5 V138.5 M614.5,129.5 V138.5 M627.5,129.5 V138.5 M640.5,129.5 V138.5 M653.5,129.5 V138.5 M666.5,129.5 V138.5 M679.5,119.5 V138.5 M692.5,129.5 V138.5 M705.5,129.5 V138.5 M718.5,129.5 V138.5 M731.5,129.5 V138.5 M744.5,129.5 V138.5 M757.5,129.5 V138.5 M770.5,129.5 V138.5 M783.5,129.5 V138.5 M796.5,129.5 V138.5 M809.5,119.5 V138.5 M821.5,129.5 V138.5 M834.5,129.5 V138.5 M847.5,129.5 V138.5 M860.5,129.5 V138.5 M873.5,129.5 V138.5 M886.5,129.5 V138.5 M899.5,129.5 V138.5 M912.5,129.5 V138.5 M925.5,129.5 V138.5 M938.5,119.5 V138.5 M951.5,129.5 V138.5 M964.5,129.5 V138.5 M977.5,129.5 V138.5 M990.5,129.5 V138.5 M1003.5,129.5 V138.5 M1016.5,129.5 V138.5 M1029.5,129.5 V138.5 M1042.5,129.5 V138.5 M1055.5,129.5 V138.5 M1068.5,119.5 V138.5 M1081.5,129.5 V138.5 M1094.5,129.5 V138.5 M1107.5,129.5 V138.5 M1120.5,129.5 V138.5 M1133.5,129.5 V138.5 M1145.5,129.5 V138.5 M1158.5,129.5 V138.5 M1171.5,129.5 V138.5 M1184.5,129.5 V138.5 M1197.5,119.5 V138.5 M1210.5,129.5 V138.5 M1223.5,129.5 V138.5 M1236.5,129.5 V138.5 " fill="none" stroke="#dcdcdc" stroke-width="1" shape-rendering="crispEdges"/>
</g>
</g>
<g id="i2c">
<line x1="209.00" y1="165.90" x2="422.00" y2="165.90" stroke="#8c8c8c" stroke-width="1" stroke-dasharray="1 2.4"/>
<line x1="438.50" y1="165.90" x2="454.00" y2="165.90" stroke="#8c8c8c" stroke-width="1" stroke-dasharray="1 2.4"/>
<line x1="780.50" y1="165.90" x2="791.00" y2="165.90" stroke="#8c8c8c" stroke-width="1" stroke-dasharray="1 2.4"/>
<path d="M209.3,154.0 L213.4,158.2 L209.3,162.3 Z" fill="#000000"/>
<text transform="translate(216.80,165.74) scale(1,1.1)" font-size="15" fill="#d6d6d6" stroke="#262626" stroke-width="0.2">1:I²C: Address/Data</text>
<path d="M209.3,178.0 L213.4,182.2 L209.3,186.3 Z" fill="#000000"/>
<text transform="translate(216.80,189.74) scale(1,1.1)" font-size="15" fill="#d6d6d6" stroke="#262626" stroke-width="0.2">1:I²C: Bits</text>
<path d="M209.3,202.0 L213.4,206.2 L209.3,210.3 Z" fill="#000000"/>
<text transform="translate(216.80,213.74) scale(1,1.1)" font-size="15" fill="#d6d6d6" stroke="#262626" stroke-width="0.2">24xx EEPROM: Fields</text>
<path d="M209.3,226.0 L213.4,230.2 L209.3,234.3 Z" fill="#000000"/>
<text transform="translate(216.80,237.74) scale(1,1.1)" font-size="15" fill="#d6d6d6" stroke="#262626" stroke-width="0.2">24xx EEPROM: Operations</text>
<path d="M209.3,250.0 L213.4,254.2 L209.3,258.3 Z" fill="#000000"/>
<text transform="translate(216.80,261.74) scale(1,1.1)" font-size="15" fill="#d6d6d6" stroke="#262626" stroke-width="0.2">24xx EEPROM: Bits/bytes</text>
<ellipse cx="430.3" cy="165.3" rx="8.3" ry="11.6" fill="#4edc44"/>
<text transform="translate(430.30,171.34) scale(1,1.1)" font-size="15" fill="#000000" text-anchor="middle" stroke="#4edc44" stroke-width="0.2">S</text>
<ellipse cx="771.9" cy="165.3" rx="8.3" ry="11.6" fill="#8ae234"/>
<text transform="translate(771.90,171.34) scale(1,1.1)" font-size="15" fill="#000000" text-anchor="middle" textLength="15" lengthAdjust="spacingAndGlyphs" stroke="#8ae234" stroke-width="0.2">Sr</text>
<polygon points="454.00,165.50 457.90,154.00 569.46,154.00 573.36,165.50 569.46,177.00 457.90,177.00" fill="#d476c4"/>
<text transform="translate(513.68,171.54) scale(1,1.1)" font-size="15" fill="#000000" text-anchor="middle" stroke="#d476c4" stroke-width="0.2">AW: 62</text>
<polygon points="574.96,165.50 578.86,154.00 586.74,154.00 590.64,165.50 586.74,177.00 578.86,177.00" fill="#d476c4"/>
<text transform="translate(582.80,171.54) scale(1,1.1)" font-size="15" fill="#000000" text-anchor="middle" stroke="#d476c4" stroke-width="0.2">W</text>
<polygon points="592.24,165.50 596.14,154.00 604.02,154.00 607.92,165.50 604.02,177.00 596.14,177.00" fill="#cdf040"/>
<text transform="translate(600.08,171.54) scale(1,1.1)" font-size="15" fill="#000000" text-anchor="middle" stroke="#cdf040" stroke-width="0.2">A</text>
<polygon points="609.52,165.50 613.42,154.00 742.26,154.00 746.16,165.50 742.26,177.00 613.42,177.00" fill="#64d1d2"/>
<text transform="translate(677.84,171.54) scale(1,1.1)" font-size="15" fill="#000000" stroke="#64d1d2" stroke-width="0.2"><tspan x="-63.01">D</tspan>ata write: <tspan font-family="'Liberation Sans',sans-serif" x="45.34">0</tspan><tspan x="54.01">2</tspan></text>
<polygon points="747.76,165.50 751.66,154.00 759.54,154.00 763.44,165.50 759.54,177.00 751.66,177.00" fill="#cdf040"/>
<text transform="translate(755.60,171.54) scale(1,1.1)" font-size="15" fill="#000000" text-anchor="middle" stroke="#cdf040" stroke-width="0.2">A</text>
<polygon points="791.00,165.50 794.90,154.00 906.46,154.00 910.36,165.50 906.46,177.00 794.90,177.00" fill="#9d79b9"/>
<text transform="translate(850.68,171.54) scale(1,1.1)" font-size="15" fill="#000000" text-anchor="middle" stroke="#9d79b9" stroke-width="0.2">AR: 62</text>
<polygon points="911.96,165.50 915.86,154.00 923.74,154.00 927.64,165.50 923.74,177.00 915.86,177.00" fill="#9d79b9"/>
<text transform="translate(919.80,171.54) scale(1,1.1)" font-size="15" fill="#000000" text-anchor="middle" stroke="#9d79b9" stroke-width="0.2">R</text>
<polygon points="929.24,165.50 933.14,154.00 941.02,154.00 944.92,165.50 941.02,177.00 933.14,177.00" fill="#cdf040"/>
<text transform="translate(937.08,171.54) scale(1,1.1)" font-size="15" fill="#000000" text-anchor="middle" stroke="#cdf040" stroke-width="0.2">A</text>
<polygon points="946.52,165.50 950.42,154.00 1079.26,154.00 1083.16,165.50 1079.26,177.00 950.42,177.00" fill="#729fcf"/>
<text transform="translate(1014.84,171.54) scale(1,1.1)" font-size="15" fill="#000000" text-anchor="middle" stroke="#729fcf" stroke-width="0.2">Data read: 32</text>
<polygon points="1084.76,165.50 1088.66,154.00 1096.54,154.00 1100.44,165.50 1096.54,177.00 1088.66,177.00" fill="#cdf040"/>
<text transform="translate(1092.60,171.54) scale(1,1.1)" font-size="15" fill="#000000" text-anchor="middle" stroke="#cdf040" stroke-width="0.2">A</text>
<polygon points="1102.04,165.50 1105.94,154.00 1234.40,154.00 1238.30,165.50 1234.40,177.00 1105.94,177.00" fill="#729fcf"/>
<text transform="translate(1170.17,171.54) scale(1,1.1)" font-size="15" fill="#000000" text-anchor="middle" stroke="#729fcf" stroke-width="0.2">Data read: BB</text>
<polygon points="454.00,189.50 457.90,178.00 465.78,178.00 469.68,189.50 465.78,201.00 457.90,201.00" fill="#55d795"/>
<text transform="translate(461.84,195.54) scale(1,1.1)" font-size="15" fill="#000000" text-anchor="middle" stroke="#55d795" stroke-width="0.2">1</text>
<polygon points="471.28,189.50 475.18,178.00 483.06,178.00 486.96,189.50 483.06,201.00 475.18,201.00" fill="#55d795"/>
<text transform="translate(479.12,195.54) scale(1,1.1)" font-size="15" fill="#000000" text-anchor="middle" stroke="#55d795" stroke-width="0.2">1</text>
<polygon points="488.56,189.50 492.46,178.00 500.34,178.00 504.24,189.50 500.34,201.00 492.46,201.00" fill="#55d795"/>
<text transform="translate(496.40,195.54) scale(1,1.1)" font-size="15" fill="#000000" stroke="#55d795" stroke-width="0.2"><tspan font-family="'Liberation Sans',sans-serif" x="-4.17">0</tspan></text>
<polygon points="505.84,189.50 509.74,178.00 517.62,178.00 521.52,189.50 517.62,201.00 509.74,201.00" fill="#55d795"/>
<text transform="translate(513.68,195.54) scale(1,1.1)" font-size="15" fill="#000000" stroke="#55d795" stroke-width="0.2"><tspan font-family="'Liberation Sans',sans-serif" x="-4.17">0</tspan></text>
<polygon points="523.12,189.50 527.02,178.00 534.90,178.00 538.80,189.50 534.90,201.00 527.02,201.00" fill="#55d795"/>
<text transform="translate(530.96,195.54) scale(1,1.1)" font-size="15" fill="#000000" stroke="#55d795" stroke-width="0.2"><tspan font-family="'Liberation Sans',sans-serif" x="-4.17">0</tspan></text>
<polygon points="540.40,189.50 544.30,178.00 552.18,178.00 556.08,189.50 552.18,201.00 544.30,201.00" fill="#55d795"/>
<text transform="translate(548.24,195.54) scale(1,1.1)" font-size="15" fill="#000000" text-anchor="middle" stroke="#55d795" stroke-width="0.2">1</text>
<polygon points="557.68,189.50 561.58,178.00 569.46,178.00 573.36,189.50 569.46,201.00 561.58,201.00" fill="#55d795"/>
<text transform="translate(565.52,195.54) scale(1,1.1)" font-size="15" fill="#000000" stroke="#55d795" stroke-width="0.2"><tspan font-family="'Liberation Sans',sans-serif" x="-4.17">0</tspan></text>
<polygon points="574.96,189.50 578.86,178.00 586.74,178.00 590.64,189.50 586.74,201.00 578.86,201.00" fill="#55d795"/>
<text transform="translate(582.80,195.54) scale(1,1.1)" font-size="15" fill="#000000" stroke="#55d795" stroke-width="0.2"><tspan font-family="'Liberation Sans',sans-serif" x="-4.17">0</tspan></text>
<polygon points="609.52,189.50 613.42,178.00 621.30,178.00 625.20,189.50 621.30,201.00 613.42,201.00" fill="#55d795"/>
<text transform="translate(617.36,195.54) scale(1,1.1)" font-size="15" fill="#000000" stroke="#55d795" stroke-width="0.2"><tspan font-family="'Liberation Sans',sans-serif" x="-4.17">0</tspan></text>
<polygon points="626.80,189.50 630.70,178.00 638.58,178.00 642.48,189.50 638.58,201.00 630.70,201.00" fill="#55d795"/>
<text transform="translate(634.64,195.54) scale(1,1.1)" font-size="15" fill="#000000" stroke="#55d795" stroke-width="0.2"><tspan font-family="'Liberation Sans',sans-serif" x="-4.17">0</tspan></text>
<polygon points="644.08,189.50 647.98,178.00 655.86,178.00 659.76,189.50 655.86,201.00 647.98,201.00" fill="#55d795"/>
<text transform="translate(651.92,195.54) scale(1,1.1)" font-size="15" fill="#000000" stroke="#55d795" stroke-width="0.2"><tspan font-family="'Liberation Sans',sans-serif" x="-4.17">0</tspan></text>
<polygon points="661.36,189.50 665.26,178.00 673.14,178.00 677.04,189.50 673.14,201.00 665.26,201.00" fill="#55d795"/>
<text transform="translate(669.20,195.54) scale(1,1.1)" font-size="15" fill="#000000" stroke="#55d795" stroke-width="0.2"><tspan font-family="'Liberation Sans',sans-serif" x="-4.17">0</tspan></text>
<polygon points="678.64,189.50 682.54,178.00 690.42,178.00 694.32,189.50 690.42,201.00 682.54,201.00" fill="#55d795"/>
<text transform="translate(686.48,195.54) scale(1,1.1)" font-size="15" fill="#000000" stroke="#55d795" stroke-width="0.2"><tspan font-family="'Liberation Sans',sans-serif" x="-4.17">0</tspan></text>
<polygon points="695.92,189.50 699.82,178.00 707.70,178.00 711.60,189.50 707.70,201.00 699.82,201.00" fill="#55d795"/>
<text transform="translate(703.76,195.54) scale(1,1.1)" font-size="15" fill="#000000" stroke="#55d795" stroke-width="0.2"><tspan font-family="'Liberation Sans',sans-serif" x="-4.17">0</tspan></text>
<polygon points="713.20,189.50 717.10,178.00 724.98,178.00 728.88,189.50 724.98,201.00 717.10,201.00" fill="#55d795"/>
<text transform="translate(721.04,195.54) scale(1,1.1)" font-size="15" fill="#000000" text-anchor="middle" stroke="#55d795" stroke-width="0.2">1</text>
<polygon points="730.48,189.50 734.38,178.00 742.26,178.00 746.16,189.50 742.26,201.00 734.38,201.00" fill="#55d795"/>
<text transform="translate(738.32,195.54) scale(1,1.1)" font-size="15" fill="#000000" stroke="#55d795" stroke-width="0.2"><tspan font-family="'Liberation Sans',sans-serif" x="-4.17">0</tspan></text>
<polygon points="791.00,189.50 794.90,178.00 802.78,178.00 806.68,189.50 802.78,201.00 794.90,201.00" fill="#55d795"/>
<text transform="translate(798.84,195.54) scale(1,1.1)" font-size="15" fill="#000000" text-anchor="middle" stroke="#55d795" stroke-width="0.2">1</text>
<polygon points="808.28,189.50 812.18,178.00 820.06,178.00 823.96,189.50 820.06,201.00 812.18,201.00" fill="#55d795"/>
<text transform="translate(816.12,195.54) scale(1,1.1)" font-size="15" fill="#000000" text-anchor="middle" stroke="#55d795" stroke-width="0.2">1</text>
<polygon points="825.56,189.50 829.46,178.00 837.34,178.00 841.24,189.50 837.34,201.00 829.46,201.00" fill="#55d795"/>
<text transform="translate(833.40,195.54) scale(1,1.1)" font-size="15" fill="#000000" stroke="#55d795" stroke-width="0.2"><tspan font-family="'Liberation Sans',sans-serif" x="-4.17">0</tspan></text>
<polygon points="842.84,189.50 846.74,178.00 854.62,178.00 858.52,189.50 854.62,201.00 846.74,201.00" fill="#55d795"/>
<text transform="translate(850.68,195.54) scale(1,1.1)" font-size="15" fill="#000000" stroke="#55d795" stroke-width="0.2"><tspan font-family="'Liberation Sans',sans-serif" x="-4.17">0</tspan></text>
<polygon points="860.12,189.50 864.02,178.00 871.90,178.00 875.80,189.50 871.90,201.00 864.02,201.00" fill="#55d795"/>
<text transform="translate(867.96,195.54) scale(1,1.1)" font-size="15" fill="#000000" stroke="#55d795" stroke-width="0.2"><tspan font-family="'Liberation Sans',sans-serif" x="-4.17">0</tspan></text>
<polygon points="877.40,189.50 881.30,178.00 889.18,178.00 893.08,189.50 889.18,201.00 881.30,201.00" fill="#55d795"/>
<text transform="translate(885.24,195.54) scale(1,1.1)" font-size="15" fill="#000000" text-anchor="middle" stroke="#55d795" stroke-width="0.2">1</text>
<polygon points="894.68,189.50 898.58,178.00 906.46,178.00 910.36,189.50 906.46,201.00 898.58,201.00" fill="#55d795"/>
<text transform="translate(902.52,195.54) scale(1,1.1)" font-size="15" fill="#000000" stroke="#55d795" stroke-width="0.2"><tspan font-family="'Liberation Sans',sans-serif" x="-4.17">0</tspan></text>
<polygon points="911.96,189.50 915.86,178.00 923.74,178.00 927.64,189.50 923.74,201.00 915.86,201.00" fill="#55d795"/>
<text transform="translate(919.80,195.54) scale(1,1.1)" font-size="15" fill="#000000" text-anchor="middle" stroke="#55d795" stroke-width="0.2">1</text>
<polygon points="946.52,189.50 950.42,178.00 958.30,178.00 962.20,189.50 958.30,201.00 950.42,201.00" fill="#55d795"/>
<text transform="translate(954.36,195.54) scale(1,1.1)" font-size="15" fill="#000000" stroke="#55d795" stroke-width="0.2"><tspan font-family="'Liberation Sans',sans-serif" x="-4.17">0</tspan></text>
<polygon points="963.80,189.50 967.70,178.00 975.58,178.00 979.48,189.50 975.58,201.00 967.70,201.00" fill="#55d795"/>
<text transform="translate(971.64,195.54) scale(1,1.1)" font-size="15" fill="#000000" stroke="#55d795" stroke-width="0.2"><tspan font-family="'Liberation Sans',sans-serif" x="-4.17">0</tspan></text>
<polygon points="981.08,189.50 984.98,178.00 992.86,178.00 996.76,189.50 992.86,201.00 984.98,201.00" fill="#55d795"/>
<text transform="translate(988.92,195.54) scale(1,1.1)" font-size="15" fill="#000000" text-anchor="middle" stroke="#55d795" stroke-width="0.2">1</text>
<polygon points="998.36,189.50 1002.26,178.00 1010.14,178.00 1014.04,189.50 1010.14,201.00 1002.26,201.00" fill="#55d795"/>
<text transform="translate(1006.20,195.54) scale(1,1.1)" font-size="15" fill="#000000" text-anchor="middle" stroke="#55d795" stroke-width="0.2">1</text>
<polygon points="1015.64,189.50 1019.54,178.00 1027.42,178.00 1031.32,189.50 1027.42,201.00 1019.54,201.00" fill="#55d795"/>
<text transform="translate(1023.48,195.54) scale(1,1.1)" font-size="15" fill="#000000" stroke="#55d795" stroke-width="0.2"><tspan font-family="'Liberation Sans',sans-serif" x="-4.17">0</tspan></text>
<polygon points="1032.92,189.50 1036.82,178.00 1044.70,178.00 1048.60,189.50 1044.70,201.00 1036.82,201.00" fill="#55d795"/>
<text transform="translate(1040.76,195.54) scale(1,1.1)" font-size="15" fill="#000000" stroke="#55d795" stroke-width="0.2"><tspan font-family="'Liberation Sans',sans-serif" x="-4.17">0</tspan></text>
<polygon points="1050.20,189.50 1054.10,178.00 1061.98,178.00 1065.88,189.50 1061.98,201.00 1054.10,201.00" fill="#55d795"/>
<text transform="translate(1058.04,195.54) scale(1,1.1)" font-size="15" fill="#000000" text-anchor="middle" stroke="#55d795" stroke-width="0.2">1</text>
<polygon points="1067.48,189.50 1071.38,178.00 1079.26,178.00 1083.16,189.50 1079.26,201.00 1071.38,201.00" fill="#55d795"/>
<text transform="translate(1075.32,195.54) scale(1,1.1)" font-size="15" fill="#000000" stroke="#55d795" stroke-width="0.2"><tspan font-family="'Liberation Sans',sans-serif" x="-4.17">0</tspan></text>
<polygon points="1102.04,189.50 1105.94,178.00 1113.82,178.00 1117.72,189.50 1113.82,201.00 1105.94,201.00" fill="#55d795"/>
<text transform="translate(1109.88,195.54) scale(1,1.1)" font-size="15" fill="#000000" text-anchor="middle" stroke="#55d795" stroke-width="0.2">1</text>
<polygon points="1119.32,189.50 1123.22,178.00 1131.10,178.00 1135.00,189.50 1131.10,201.00 1123.22,201.00" fill="#55d795"/>
<text transform="translate(1127.16,195.54) scale(1,1.1)" font-size="15" fill="#000000" stroke="#55d795" stroke-width="0.2"><tspan font-family="'Liberation Sans',sans-serif" x="-4.17">0</tspan></text>
<polygon points="1136.60,189.50 1140.50,178.00 1148.38,178.00 1152.28,189.50 1148.38,201.00 1140.50,201.00" fill="#55d795"/>
<text transform="translate(1144.44,195.54) scale(1,1.1)" font-size="15" fill="#000000" text-anchor="middle" stroke="#55d795" stroke-width="0.2">1</text>
<polygon points="1153.88,189.50 1157.78,178.00 1165.66,178.00 1169.56,189.50 1165.66,201.00 1157.78,201.00" fill="#55d795"/>
<text transform="translate(1161.72,195.54) scale(1,1.1)" font-size="15" fill="#000000" text-anchor="middle" stroke="#55d795" stroke-width="0.2">1</text>
<polygon points="1171.16,189.50 1175.06,178.00 1182.94,178.00 1186.84,189.50 1182.94,201.00 1175.06,201.00" fill="#55d795"/>
<text transform="translate(1179.00,195.54) scale(1,1.1)" font-size="15" fill="#000000" text-anchor="middle" stroke="#55d795" stroke-width="0.2">1</text>
<polygon points="1188.44,189.50 1192.34,178.00 1200.22,178.00 1204.12,189.50 1200.22,201.00 1192.34,201.00" fill="#55d795"/>
<text transform="translate(1196.28,195.54) scale(1,1.1)" font-size="15" fill="#000000" stroke="#55d795" stroke-width="0.2"><tspan font-family="'Liberation Sans',sans-serif" x="-4.17">0</tspan></text>
<polygon points="1205.72,189.50 1209.62,178.00 1217.50,178.00 1221.40,189.50 1217.50,201.00 1209.62,201.00" fill="#55d795"/>
<text transform="translate(1213.56,195.54) scale(1,1.1)" font-size="15" fill="#000000" text-anchor="middle" stroke="#55d795" stroke-width="0.2">1</text>
<polygon points="1223.00,189.50 1226.83,178.00 1234.47,178.00 1238.30,189.50 1234.47,201.00 1226.83,201.00" fill="#55d795"/>
<text transform="translate(1230.65,195.54) scale(1,1.1)" font-size="15" fill="#000000" text-anchor="middle" stroke="#55d795" stroke-width="0.2">1</text>
<polygon points="454.00,213.50 457.90,202.00 586.74,202.00 590.64,213.50 586.74,225.00 457.90,225.00" fill="#ad7fa8"/>
<text transform="translate(522.32,219.54) scale(1,1.1)" font-size="15" fill="#000000" text-anchor="middle" stroke="#ad7fa8" stroke-width="0.2">Control word</text>
<polygon points="609.52,213.50 613.42,202.00 742.26,202.00 746.16,213.50 742.26,225.00 613.42,225.00" fill="#c2629b"/>
<text transform="translate(677.84,219.54) scale(1,1.1)" font-size="15" fill="#000000" text-anchor="middle" stroke="#c2629b" stroke-width="0.2">Word address</text>
<polygon points="791.00,213.50 794.90,202.00 923.74,202.00 927.64,213.50 923.74,225.00 794.90,225.00" fill="#ad7fa8"/>
<text transform="translate(859.32,219.54) scale(1,1.1)" font-size="15" fill="#000000" text-anchor="middle" stroke="#ad7fa8" stroke-width="0.2">Control word</text>
<polygon points="946.52,213.50 950.42,202.00 1234.40,202.00 1238.30,213.50 1234.40,225.00 950.42,225.00" fill="#d7476f"/>
<text transform="translate(1092.41,219.54) scale(1,1.1)" font-size="15" fill="#000000" text-anchor="middle" stroke="#d7476f" stroke-width="0.2">Data</text>
<polygon points="430.90,237.50 434.80,226.00 1234.40,226.00 1238.30,237.50 1234.40,249.00 434.80,249.00" fill="#fce94f"/>
<text transform="translate(833.30,243.54) scale(1,1.1)" font-size="15" fill="#000000" stroke="#fce94f" stroke-width="0.2"><tspan x="-216.04">S</tspan>equential random read (addr=<tspan font-family="'Liberation Sans',sans-serif" x="45.34">0</tspan><tspan x="54.01">2</tspan>, 2 bytes): 32 BB</text>
<polygon points="454.00,261.50 457.90,250.00 517.62,250.00 521.52,261.50 517.62,273.00 457.90,273.00" fill="#55d795"/>
<text transform="translate(487.76,267.54) scale(1,1.1)" font-size="15" fill="#000000" text-anchor="middle" stroke="#55d795" stroke-width="0.2">Ctrl</text>
<polygon points="523.12,261.50 527.02,250.00 534.90,250.00 538.80,261.50 534.90,273.00 527.02,273.00" fill="#64d1d2"/>
<text transform="translate(530.96,267.54) scale(1,1.1)" font-size="15" fill="#000000" text-anchor="middle" stroke="#64d1d2" stroke-width="0.2">A</text>
<polygon points="540.40,261.50 544.30,250.00 552.18,250.00 556.08,261.50 552.18,273.00 544.30,273.00" fill="#64d1d2"/>
<text transform="translate(548.24,267.54) scale(1,1.1)" font-size="15" fill="#000000" text-anchor="middle" stroke="#64d1d2" stroke-width="0.2">A</text>
<polygon points="557.68,261.50 561.58,250.00 569.46,250.00 573.36,261.50 569.46,273.00 561.58,273.00" fill="#64d1d2"/>
<text transform="translate(565.52,267.54) scale(1,1.1)" font-size="15" fill="#000000" text-anchor="middle" stroke="#64d1d2" stroke-width="0.2">A</text>
<polygon points="574.96,261.50 578.86,250.00 586.74,250.00 590.64,261.50 586.74,273.00 578.86,273.00" fill="#729fcf"/>
<text transform="translate(582.80,267.54) scale(1,1.1)" font-size="15" fill="#000000" text-anchor="middle" stroke="#729fcf" stroke-width="0.2">W</text>
<polygon points="791.00,261.50 794.90,250.00 854.62,250.00 858.52,261.50 854.62,273.00 794.90,273.00" fill="#55d795"/>
<text transform="translate(824.76,267.54) scale(1,1.1)" font-size="15" fill="#000000" text-anchor="middle" stroke="#55d795" stroke-width="0.2">Ctrl</text>
<polygon points="860.12,261.50 864.02,250.00 871.90,250.00 875.80,261.50 871.90,273.00 864.02,273.00" fill="#64d1d2"/>
<text transform="translate(867.96,267.54) scale(1,1.1)" font-size="15" fill="#000000" text-anchor="middle" stroke="#64d1d2" stroke-width="0.2">A</text>
<polygon points="877.40,261.50 881.30,250.00 889.18,250.00 893.08,261.50 889.18,273.00 881.30,273.00" fill="#64d1d2"/>
<text transform="translate(885.24,267.54) scale(1,1.1)" font-size="15" fill="#000000" text-anchor="middle" stroke="#64d1d2" stroke-width="0.2">A</text>
<polygon points="894.68,261.50 898.58,250.00 906.46,250.00 910.36,261.50 906.46,273.00 898.58,273.00" fill="#64d1d2"/>
<text transform="translate(902.52,267.54) scale(1,1.1)" font-size="15" fill="#000000" text-anchor="middle" stroke="#64d1d2" stroke-width="0.2">A</text>
<polygon points="911.96,261.50 915.86,250.00 923.74,250.00 927.64,261.50 923.74,273.00 915.86,273.00" fill="#729fcf"/>
<text transform="translate(919.80,267.54) scale(1,1.1)" font-size="15" fill="#000000" text-anchor="middle" stroke="#729fcf" stroke-width="0.2">R</text>
<polygon points="609.52,261.50 613.42,250.00 742.26,250.00 746.16,261.50 742.26,273.00 613.42,273.00" fill="#d476c4"/>
<text transform="translate(677.84,267.54) scale(1,1.1)" font-size="15" fill="#000000" stroke="#d476c4" stroke-width="0.2"><tspan x="-36.01">A</tspan>ddr: <tspan font-family="'Liberation Sans',sans-serif" x="18.33">0</tspan><tspan x="27.00">2</tspan></text>
<polygon points="946.52,261.50 950.42,250.00 1079.26,250.00 1083.16,261.50 1079.26,273.00 950.42,273.00" fill="#9d79b9"/>
<text transform="translate(1014.84,267.54) scale(1,1.1)" font-size="15" fill="#000000" text-anchor="middle" stroke="#9d79b9" stroke-width="0.2">Data byte: 32</text>
<polygon points="1102.04,261.50 1105.94,250.00 1234.40,250.00 1238.30,261.50 1234.40,273.00 1105.94,273.00" fill="#9d79b9"/>
<text transform="translate(1170.17,267.54) scale(1,1.1)" font-size="15" fill="#000000" text-anchor="middle" stroke="#9d79b9" stroke-width="0.2">Data byte: BB</text>
</g>
<g id="can">
<line x1="209.00" y1="299.90" x2="430.00" y2="299.90" stroke="#8c8c8c" stroke-width="1" stroke-dasharray="1 2.4"/>
<line x1="1075.50" y1="299.90" x2="1080.00" y2="299.90" stroke="#8c8c8c" stroke-width="1" stroke-dasharray="1 2.4"/>
<line x1="1213.50" y1="299.90" x2="1239.60" y2="299.90" stroke="#8c8c8c" stroke-width="1" stroke-dasharray="1 2.4"/>
<path d="M209.3,288.0 L213.4,292.2 L209.3,296.3 Z" fill="#000000"/>
<text transform="translate(216.80,299.74) scale(1,1.1)" font-size="15" fill="#d6d6d6" stroke="#262626" stroke-width="0.2">CAN: Fields</text>
<path d="M209.3,312.0 L213.4,316.2 L209.3,320.3 Z" fill="#000000"/>
<text transform="translate(216.80,323.74) scale(1,1.1)" font-size="15" fill="#d6d6d6" stroke="#262626" stroke-width="0.2">CAN: Bits</text>
<path d="M209.3,336.0 L213.4,340.2 L209.3,344.3 Z" fill="#000000"/>
<text transform="translate(216.80,347.74) scale(1,1.1)" font-size="15" fill="#d6d6d6" stroke="#262626" stroke-width="0.2">CAN: Warnings</text>
<polygon points="431.00,323.50 434.82,312.00 442.48,312.00 446.30,323.50 442.48,335.00 434.82,335.00" fill="#55d795"/>
<text transform="translate(438.65,329.04) scale(1,1.1)" font-size="15" fill="#000000" stroke="#55d795" stroke-width="0.2"><tspan font-family="'Liberation Sans',sans-serif" x="-4.17">0</tspan></text>
<polygon points="448.40,323.50 452.22,312.00 459.88,312.00 463.70,323.50 459.88,335.00 452.22,335.00" fill="#55d795"/>
<text transform="translate(456.05,329.04) scale(1,1.1)" font-size="15" fill="#000000" text-anchor="middle" stroke="#55d795" stroke-width="0.2">1</text>
<polygon points="465.90,323.50 469.72,312.00 477.38,312.00 481.20,323.50 477.38,335.00 469.72,335.00" fill="#55d795"/>
<text transform="translate(473.55,329.04) scale(1,1.1)" font-size="15" fill="#000000" text-anchor="middle" stroke="#55d795" stroke-width="0.2">1</text>
<polygon points="484.00,323.50 487.82,312.00 495.48,312.00 499.30,323.50 495.48,335.00 487.82,335.00" fill="#55d795"/>
<text transform="translate(491.65,329.04) scale(1,1.1)" font-size="15" fill="#000000" stroke="#55d795" stroke-width="0.2"><tspan font-family="'Liberation Sans',sans-serif" x="-4.17">0</tspan></text>
<polygon points="501.50,323.50 505.32,312.00 512.97,312.00 516.80,323.50 512.97,335.00 505.32,335.00" fill="#55d795"/>
<text transform="translate(509.15,329.04) scale(1,1.1)" font-size="15" fill="#000000" stroke="#55d795" stroke-width="0.2"><tspan font-family="'Liberation Sans',sans-serif" x="-4.17">0</tspan></text>
<polygon points="518.90,323.50 522.72,312.00 530.38,312.00 534.20,323.50 530.38,335.00 522.72,335.00" fill="#55d795"/>
<text transform="translate(526.55,329.04) scale(1,1.1)" font-size="15" fill="#000000" stroke="#55d795" stroke-width="0.2"><tspan font-family="'Liberation Sans',sans-serif" x="-4.17">0</tspan></text>
<polygon points="536.40,323.50 540.22,312.00 547.88,312.00 551.70,323.50 547.88,335.00 540.22,335.00" fill="#55d795"/>
<text transform="translate(544.05,329.04) scale(1,1.1)" font-size="15" fill="#000000" text-anchor="middle" stroke="#55d795" stroke-width="0.2">1</text>
<polygon points="553.80,323.50 557.62,312.00 565.27,312.00 569.10,323.50 565.27,335.00 557.62,335.00" fill="#55d795"/>
<text transform="translate(561.45,329.04) scale(1,1.1)" font-size="15" fill="#000000" stroke="#55d795" stroke-width="0.2"><tspan font-family="'Liberation Sans',sans-serif" x="-4.17">0</tspan></text>
<polygon points="571.20,323.50 575.03,312.00 582.67,312.00 586.50,323.50 582.67,335.00 575.03,335.00" fill="#55d795"/>
<text transform="translate(578.85,329.04) scale(1,1.1)" font-size="15" fill="#000000" stroke="#55d795" stroke-width="0.2"><tspan font-family="'Liberation Sans',sans-serif" x="-4.17">0</tspan></text>
<polygon points="588.70,323.50 592.53,312.00 600.17,312.00 604.00,323.50 600.17,335.00 592.53,335.00" fill="#55d795"/>
<text transform="translate(596.35,329.04) scale(1,1.1)" font-size="15" fill="#000000" stroke="#55d795" stroke-width="0.2"><tspan font-family="'Liberation Sans',sans-serif" x="-4.17">0</tspan></text>
<polygon points="606.30,323.50 610.12,312.00 617.77,312.00 621.60,323.50 617.77,335.00 610.12,335.00" fill="#55d795"/>
<text transform="translate(613.95,329.04) scale(1,1.1)" font-size="15" fill="#000000" stroke="#55d795" stroke-width="0.2"><tspan font-family="'Liberation Sans',sans-serif" x="-4.17">0</tspan></text>
<polygon points="623.70,323.50 627.53,312.00 635.17,312.00 639.00,323.50 635.17,335.00 627.53,335.00" fill="#55d795"/>
<text transform="translate(631.35,329.04) scale(1,1.1)" font-size="15" fill="#000000" stroke="#55d795" stroke-width="0.2"><tspan font-family="'Liberation Sans',sans-serif" x="-4.17">0</tspan></text>
<polygon points="640.00,323.50 643.83,312.00 651.47,312.00 655.30,323.50 651.47,335.00 643.83,335.00" fill="#55d795"/>
<text transform="translate(647.65,329.04) scale(1,1.1)" font-size="15" fill="#000000" stroke="#55d795" stroke-width="0.2"><tspan font-family="'Liberation Sans',sans-serif" x="-4.17">0</tspan></text>
<polygon points="657.40,323.50 661.22,312.00 668.88,312.00 672.70,323.50 668.88,335.00 661.22,335.00" fill="#55d795"/>
<text transform="translate(665.05,329.04) scale(1,1.1)" font-size="15" fill="#000000" stroke="#55d795" stroke-width="0.2"><tspan font-family="'Liberation Sans',sans-serif" x="-4.17">0</tspan></text>
<polygon points="674.90,323.50 678.72,312.00 686.38,312.00 690.20,323.50 686.38,335.00 678.72,335.00" fill="#55d795"/>
<text transform="translate(682.55,329.04) scale(1,1.1)" font-size="15" fill="#000000" stroke="#55d795" stroke-width="0.2"><tspan font-family="'Liberation Sans',sans-serif" x="-4.17">0</tspan></text>
<polygon points="691.70,323.50 695.53,312.00 703.17,312.00 707.00,323.50 703.17,335.00 695.53,335.00" fill="#55d795"/>
<text transform="translate(699.35,329.04) scale(1,1.1)" font-size="15" fill="#000000" stroke="#55d795" stroke-width="0.2"><tspan font-family="'Liberation Sans',sans-serif" x="-4.17">0</tspan></text>
<polygon points="708.80,323.50 712.62,312.00 720.27,312.00 724.10,323.50 720.27,335.00 712.62,335.00" fill="#8ae234"/>
<text transform="translate(716.45,329.04) scale(1,1.1)" font-size="15" fill="#000000" text-anchor="middle" stroke="#8ae234" stroke-width="0.2">1</text>
<polygon points="726.30,323.50 730.12,312.00 737.77,312.00 741.60,323.50 737.77,335.00 730.12,335.00" fill="#55d795"/>
<text transform="translate(733.95,329.04) scale(1,1.1)" font-size="15" fill="#000000" stroke="#55d795" stroke-width="0.2"><tspan font-family="'Liberation Sans',sans-serif" x="-4.17">0</tspan></text>
<polygon points="743.70,323.50 747.53,312.00 755.17,312.00 759.00,323.50 755.17,335.00 747.53,335.00" fill="#55d795"/>
<text transform="translate(751.35,329.04) scale(1,1.1)" font-size="15" fill="#000000" stroke="#55d795" stroke-width="0.2"><tspan font-family="'Liberation Sans',sans-serif" x="-4.17">0</tspan></text>
<polygon points="772.30,323.50 776.12,312.00 783.77,312.00 787.60,323.50 783.77,335.00 776.12,335.00" fill="#55d795"/>
<text transform="translate(779.95,329.04) scale(1,1.1)" font-size="15" fill="#000000" stroke="#55d795" stroke-width="0.2"><tspan font-family="'Liberation Sans',sans-serif" x="-4.17">0</tspan></text>
<polygon points="789.80,323.50 793.62,312.00 801.27,312.00 805.10,323.50 801.27,335.00 793.62,335.00" fill="#55d795"/>
<text transform="translate(797.45,329.04) scale(1,1.1)" font-size="15" fill="#000000" text-anchor="middle" stroke="#55d795" stroke-width="0.2">1</text>
<polygon points="807.20,323.50 810.58,312.00 817.32,312.00 820.70,323.50 817.32,335.00 810.58,335.00" fill="#55d795"/>
<text transform="translate(813.95,329.04) scale(1,1.1)" font-size="15" fill="#000000" text-anchor="middle" stroke="#55d795" stroke-width="0.2">1</text>
<polygon points="821.30,323.50 825.12,312.00 832.77,312.00 836.60,323.50 832.77,335.00 825.12,335.00" fill="#55d795"/>
<text transform="translate(828.95,329.04) scale(1,1.1)" font-size="15" fill="#000000" stroke="#55d795" stroke-width="0.2"><tspan font-family="'Liberation Sans',sans-serif" x="-4.17">0</tspan></text>
<polygon points="838.40,323.50 842.22,312.00 849.88,312.00 853.70,323.50 849.88,335.00 842.22,335.00" fill="#55d795"/>
<text transform="translate(846.05,329.04) scale(1,1.1)" font-size="15" fill="#000000" stroke="#55d795" stroke-width="0.2"><tspan font-family="'Liberation Sans',sans-serif" x="-4.17">0</tspan></text>
<polygon points="855.90,323.50 859.72,312.00 867.38,312.00 871.20,323.50 867.38,335.00 859.72,335.00" fill="#55d795"/>
<text transform="translate(863.55,329.04) scale(1,1.1)" font-size="15" fill="#000000" stroke="#55d795" stroke-width="0.2"><tspan font-family="'Liberation Sans',sans-serif" x="-4.17">0</tspan></text>
<polygon points="873.30,323.50 877.12,312.00 884.77,312.00 888.60,323.50 884.77,335.00 877.12,335.00" fill="#55d795"/>
<text transform="translate(880.95,329.04) scale(1,1.1)" font-size="15" fill="#000000" text-anchor="middle" stroke="#55d795" stroke-width="0.2">1</text>
<polygon points="890.20,323.50 894.03,312.00 901.67,312.00 905.50,323.50 901.67,335.00 894.03,335.00" fill="#55d795"/>
<text transform="translate(897.85,329.04) scale(1,1.1)" font-size="15" fill="#000000" stroke="#55d795" stroke-width="0.2"><tspan font-family="'Liberation Sans',sans-serif" x="-4.17">0</tspan></text>
<polygon points="907.60,323.50 910.95,312.00 917.65,312.00 921.00,323.50 917.65,335.00 910.95,335.00" fill="#55d795"/>
<text transform="translate(914.30,329.04) scale(1,1.1)" font-size="15" fill="#000000" text-anchor="middle" stroke="#55d795" stroke-width="0.2">1</text>
<polygon points="921.60,323.50 925.42,312.00 933.08,312.00 936.90,323.50 933.08,335.00 925.42,335.00" fill="#55d795"/>
<text transform="translate(929.25,329.04) scale(1,1.1)" font-size="15" fill="#000000" stroke="#55d795" stroke-width="0.2"><tspan font-family="'Liberation Sans',sans-serif" x="-4.17">0</tspan></text>
<polygon points="938.10,323.50 941.92,312.00 949.58,312.00 953.40,323.50 949.58,335.00 941.92,335.00" fill="#55d795"/>
<text transform="translate(945.75,329.04) scale(1,1.1)" font-size="15" fill="#000000" stroke="#55d795" stroke-width="0.2"><tspan font-family="'Liberation Sans',sans-serif" x="-4.17">0</tspan></text>
<polygon points="955.60,323.50 959.42,312.00 967.08,312.00 970.90,323.50 967.08,335.00 959.42,335.00" fill="#55d795"/>
<text transform="translate(963.25,329.04) scale(1,1.1)" font-size="15" fill="#000000" stroke="#55d795" stroke-width="0.2"><tspan font-family="'Liberation Sans',sans-serif" x="-4.17">0</tspan></text>
<polygon points="973.00,323.50 976.83,312.00 984.47,312.00 988.30,323.50 984.47,335.00 976.83,335.00" fill="#55d795"/>
<text transform="translate(980.65,329.04) scale(1,1.1)" font-size="15" fill="#000000" text-anchor="middle" stroke="#55d795" stroke-width="0.2">1</text>
<polygon points="990.50,323.50 994.33,312.00 1001.97,312.00 1005.80,323.50 1001.97,335.00 994.33,335.00" fill="#55d795"/>
<text transform="translate(998.15,329.04) scale(1,1.1)" font-size="15" fill="#000000" text-anchor="middle" stroke="#55d795" stroke-width="0.2">1</text>
<polygon points="1007.70,323.50 1011.53,312.00 1019.17,312.00 1023.00,323.50 1019.17,335.00 1011.53,335.00" fill="#55d795"/>
<text transform="translate(1015.35,329.04) scale(1,1.1)" font-size="15" fill="#000000" stroke="#55d795" stroke-width="0.2"><tspan font-family="'Liberation Sans',sans-serif" x="-4.17">0</tspan></text>
<polygon points="1024.50,323.50 1028.33,312.00 1035.97,312.00 1039.80,323.50 1035.97,335.00 1028.33,335.00" fill="#55d795"/>
<text transform="translate(1032.15,329.04) scale(1,1.1)" font-size="15" fill="#000000" stroke="#55d795" stroke-width="0.2"><tspan font-family="'Liberation Sans',sans-serif" x="-4.17">0</tspan></text>
<polygon points="1041.70,323.50 1045.53,312.00 1053.17,312.00 1057.00,323.50 1053.17,335.00 1045.53,335.00" fill="#55d795"/>
<text transform="translate(1049.35,329.04) scale(1,1.1)" font-size="15" fill="#000000" text-anchor="middle" stroke="#55d795" stroke-width="0.2">1</text>
<polygon points="1059.20,323.50 1063.03,312.00 1070.67,312.00 1074.50,323.50 1070.67,335.00 1063.03,335.00" fill="#55d795"/>
<text transform="translate(1066.85,329.04) scale(1,1.1)" font-size="15" fill="#000000" stroke="#55d795" stroke-width="0.2"><tspan font-family="'Liberation Sans',sans-serif" x="-4.17">0</tspan></text>
<polygon points="1080.00,323.50 1083.83,312.00 1091.47,312.00 1095.30,323.50 1091.47,335.00 1083.83,335.00" fill="#55d795"/>
<text transform="translate(1087.65,329.04) scale(1,1.1)" font-size="15" fill="#000000" stroke="#55d795" stroke-width="0.2"><tspan font-family="'Liberation Sans',sans-serif" x="-4.17">0</tspan></text>
<polygon points="1096.90,323.50 1100.55,312.00 1107.85,312.00 1111.50,323.50 1107.85,335.00 1100.55,335.00" fill="#55d795"/>
<text transform="translate(1104.20,329.04) scale(1,1.1)" font-size="15" fill="#000000" text-anchor="middle" stroke="#55d795" stroke-width="0.2">1</text>
<polygon points="1112.10,323.50 1115.92,312.00 1123.57,312.00 1127.40,323.50 1123.57,335.00 1115.92,335.00" fill="#55d795"/>
<text transform="translate(1119.75,329.04) scale(1,1.1)" font-size="15" fill="#000000" stroke="#55d795" stroke-width="0.2"><tspan font-family="'Liberation Sans',sans-serif" x="-4.17">0</tspan></text>
<polygon points="1128.70,323.50 1132.53,312.00 1140.17,312.00 1144.00,323.50 1140.17,335.00 1132.53,335.00" fill="#55d795"/>
<text transform="translate(1136.35,329.04) scale(1,1.1)" font-size="15" fill="#000000" text-anchor="middle" stroke="#55d795" stroke-width="0.2">1</text>
<polygon points="1145.80,323.50 1149.62,312.00 1157.27,312.00 1161.10,323.50 1157.27,335.00 1149.62,335.00" fill="#55d795"/>
<text transform="translate(1153.45,329.04) scale(1,1.1)" font-size="15" fill="#000000" text-anchor="middle" stroke="#55d795" stroke-width="0.2">1</text>
<polygon points="1163.30,323.50 1167.12,312.00 1174.77,312.00 1178.60,323.50 1174.77,335.00 1167.12,335.00" fill="#55d795"/>
<text transform="translate(1170.95,329.04) scale(1,1.1)" font-size="15" fill="#000000" text-anchor="middle" stroke="#55d795" stroke-width="0.2">1</text>
<polygon points="1180.50,323.50 1184.33,312.00 1191.97,312.00 1195.80,323.50 1191.97,335.00 1184.33,335.00" fill="#55d795"/>
<text transform="translate(1188.15,329.04) scale(1,1.1)" font-size="15" fill="#000000" stroke="#55d795" stroke-width="0.2"><tspan font-family="'Liberation Sans',sans-serif" x="-4.17">0</tspan></text>
<polygon points="1197.90,323.50 1201.73,312.00 1209.38,312.00 1213.20,323.50 1209.38,335.00 1201.73,335.00" fill="#55d795"/>
<text transform="translate(1205.55,329.04) scale(1,1.1)" font-size="15" fill="#000000" text-anchor="middle" stroke="#55d795" stroke-width="0.2">1</text>
<polygon points="431.00,299.50 434.85,288.00 442.55,288.00 446.40,299.50 442.55,311.00 434.85,311.00" fill="#55d795"/>
<text transform="translate(438.70,305.54) scale(1,1.1)" font-size="15" fill="#000000" text-anchor="middle" stroke="#55d795" stroke-width="0.2">S</text>
<polygon points="448.30,299.50 452.20,288.00 634.10,288.00 638.00,299.50 634.10,311.00 452.20,311.00" fill="#729fcf"/>
<text transform="translate(543.15,305.54) scale(1,1.1)" font-size="15" fill="#000000" stroke="#729fcf" stroke-width="0.2"><tspan x="-72.01">I</tspan>D: 1568 (<tspan font-family="'Liberation Sans',sans-serif" x="18.33">0</tspan><tspan x="27.00">x</tspan>62<tspan font-family="'Liberation Sans',sans-serif" x="54.34">0</tspan><tspan x="63.01">)</tspan></text>
<polygon points="640.00,299.50 643.73,288.00 651.17,288.00 654.90,299.50 651.17,311.00 643.73,311.00" fill="#d7476f"/>
<polygon points="657.40,299.50 661.15,288.00 668.65,288.00 672.40,299.50 668.65,311.00 661.15,311.00" fill="#ad7fa8"/>
<polygon points="674.60,299.50 678.40,288.00 686.00,288.00 689.80,299.50 686.00,311.00 678.40,311.00" fill="#c2629b"/>
<polygon points="691.60,299.50 695.50,288.00 784.00,288.00 787.90,299.50 784.00,311.00 695.50,311.00" fill="#f66a32"/>
<text transform="translate(739.75,305.54) scale(1,1.1)" font-size="15" fill="#000000" stroke="#f66a32" stroke-width="0.2"><tspan x="-27.00">D</tspan>LC: <tspan font-family="'Liberation Sans',sans-serif" x="18.33">0</tspan></text>
<polygon points="789.80,299.50 793.70,288.00 1035.90,288.00 1039.80,299.50 1035.90,311.00 793.70,311.00" fill="#fcae3e"/>
<text transform="translate(914.80,305.54) scale(1,1.1)" font-size="15" fill="#000000" stroke="#fcae3e" stroke-width="0.2"><tspan x="-90.01">C</tspan>RC sequence: <tspan font-family="'Liberation Sans',sans-serif" x="36.34">0</tspan><tspan x="45.01">x</tspan>628c</text>
<polygon points="1041.70,299.50 1045.50,288.00 1053.10,288.00 1056.90,299.50 1053.10,311.00 1045.50,311.00" fill="#fbca47"/>
<polygon points="1059.20,299.50 1063.08,288.00 1070.83,288.00 1074.70,299.50 1070.83,311.00 1063.08,311.00" fill="#fce94f"/>
<polygon points="1080.00,299.50 1083.90,288.00 1091.70,288.00 1095.60,299.50 1091.70,311.00 1083.90,311.00" fill="#cdf040"/>
<polygon points="1096.90,299.50 1100.80,288.00 1208.90,288.00 1212.80,299.50 1208.90,311.00 1100.80,311.00" fill="#64d1d2"/>
<text transform="translate(1154.85,305.54) scale(1,1.1)" font-size="15" fill="#000000" text-anchor="middle" stroke="#64d1d2" stroke-width="0.2">EOF</text>
<polygon points="1080.00,347.50 1083.90,336.00 1091.70,336.00 1095.60,347.50 1091.70,359.00 1083.90,359.00" fill="#4edc44"/>
<polygon points="1096.90,347.50 1100.80,336.00 1208.90,336.00 1212.80,347.50 1208.90,359.00 1100.80,359.00" fill="#4edc44"/>
<text transform="translate(1105.35,353.54) scale(1,1.1)" font-size="15" fill="#000000" stroke="#4edc44" stroke-width="0.2">End of fr<tspan letter-spacing="-4.1" dx="-1.9" dy="-2.2">···</tspan></text>
</g>
<g id="counter-pwm">
<line x1="209.00" y1="423.90" x2="449.00" y2="423.90" stroke="#8c8c8c" stroke-width="1" stroke-dasharray="1 2.4"/>
<path d="M209.3,412.0 L213.4,416.2 L209.3,420.3 Z" fill="#000000"/>
<text transform="translate(216.80,423.74) scale(1,1.1)" font-size="15" fill="#d6d6d6" stroke="#262626" stroke-width="0.2">PWM: Period</text>
<path d="M209.3,436.0 L213.4,440.2 L209.3,444.3 Z" fill="#000000"/>
<text transform="translate(216.80,447.74) scale(1,1.1)" font-size="15" fill="#d6d6d6" stroke="#262626" stroke-width="0.2">PWM: Duty cycle</text>
<path d="M209.3,374 L213.4,378.2 L209.3,382.3 Z" fill="#000000"/>
<polygon points="209.70,385.50 213.60,374.00 443.80,374.00 447.70,385.50 443.80,397.00 213.60,397.00" fill="#4edc44"/>
<text transform="translate(328.70,391.04) scale(1,1.1)" font-size="15" fill="#000000" text-anchor="middle" stroke="#4edc44" stroke-width="0.2">1</text>
<polygon points="450.30,385.50 454.20,374.00 531.00,374.00 534.90,385.50 531.00,397.00 454.20,397.00" fill="#4edc44"/>
<text transform="translate(492.60,391.04) scale(1,1.1)" font-size="15" fill="#000000" text-anchor="middle" stroke="#4edc44" stroke-width="0.2">2</text>
<polygon points="450.30,423.50 454.20,412.00 531.00,412.00 534.90,423.50 531.00,435.00 454.20,435.00" fill="#55d795"/>
<text transform="translate(492.60,428.04) scale(1,1.1)" font-size="15" fill="#000000" stroke="#55d795" stroke-width="0.2"><tspan x="-31.51">5</tspan><tspan font-family="'Liberation Sans',sans-serif" x="-22.17">0</tspan><tspan x="-13.50">.</tspan>1 µs</text>
<polygon points="450.30,447.50 454.20,436.00 531.00,436.00 534.90,447.50 531.00,459.00 454.20,459.00" fill="#4edc44"/>
<text transform="translate(456.60,452.94) scale(1,1.1)" font-size="15" fill="#000000" stroke="#4edc44" stroke-width="0.2">39.776<tspan letter-spacing="-4.1" dx="-1.9" dy="-2.2">···</tspan></text>
<polygon points="536.70,385.50 540.60,374.00 595.70,374.00 599.60,385.50 595.70,397.00 540.60,397.00" fill="#4edc44"/>
<text transform="translate(568.15,391.04) scale(1,1.1)" font-size="15" fill="#000000" text-anchor="middle" stroke="#4edc44" stroke-width="0.2">3</text>
<polygon points="536.70,423.50 540.60,412.00 595.70,412.00 599.60,423.50 595.70,435.00 540.60,435.00" fill="#55d795"/>
<text transform="translate(541.15,428.04) scale(1,1.1)" font-size="15" fill="#000000" stroke="#55d795" stroke-width="0.2">37.8<tspan letter-spacing="-4.1" dx="-1.9" dy="-2.2">···</tspan></text>
<polygon points="536.70,447.50 540.60,436.00 595.70,436.00 599.60,447.50 595.70,459.00 540.60,459.00" fill="#4edc44"/>
<text transform="translate(541.15,452.94) scale(1,1.1)" font-size="15" fill="#000000" stroke="#4edc44" stroke-width="0.2">26.2<tspan letter-spacing="-4.1" dx="-1.9" dy="-2.2">···</tspan></text>
<polygon points="601.50,385.50 605.40,374.00 703.10,374.00 707.00,385.50 703.10,397.00 605.40,397.00" fill="#4edc44"/>
<text transform="translate(654.25,391.04) scale(1,1.1)" font-size="15" fill="#000000" text-anchor="middle" stroke="#4edc44" stroke-width="0.2">4</text>
<polygon points="601.50,423.50 605.40,412.00 703.10,412.00 707.00,423.50 703.10,435.00 605.40,435.00" fill="#55d795"/>
<text transform="translate(654.25,428.04) scale(1,1.1)" font-size="15" fill="#000000" text-anchor="middle" stroke="#55d795" stroke-width="0.2">62.4 µs</text>
<polygon points="601.50,447.50 605.40,436.00 703.10,436.00 707.00,447.50 703.10,459.00 605.40,459.00" fill="#4edc44"/>
<text transform="translate(654.25,452.94) scale(1,1.1)" font-size="15" fill="#000000" text-anchor="middle" stroke="#4edc44" stroke-width="0.2">3.525641%</text>
<polygon points="709.20,385.50 713.10,374.00 750.90,374.00 754.80,385.50 750.90,397.00 713.10,397.00" fill="#4edc44"/>
<text transform="translate(732.00,391.04) scale(1,1.1)" font-size="15" fill="#000000" text-anchor="middle" stroke="#4edc44" stroke-width="0.2">5</text>
<polygon points="709.20,423.50 713.10,412.00 750.90,412.00 754.80,423.50 750.90,435.00 713.10,435.00" fill="#55d795"/>
<text transform="translate(714.00,428.04) scale(1,1.1)" font-size="15" fill="#000000" stroke="#55d795" stroke-width="0.2">27<tspan letter-spacing="-4.1" dx="-1.9" dy="-2.2">···</tspan></text>
<polygon points="709.20,447.50 713.10,436.00 750.90,436.00 754.80,447.50 750.90,459.00 713.10,459.00" fill="#4edc44"/>
<text transform="translate(714.00,452.94) scale(1,1.1)" font-size="15" fill="#000000" stroke="#4edc44" stroke-width="0.2">35<tspan letter-spacing="-4.1" dx="-1.9" dy="-2.2">···</tspan></text>
<polygon points="757.10,385.50 761.00,374.00 780.90,374.00 784.80,385.50 780.90,397.00 761.00,397.00" fill="#4edc44"/>
<text transform="translate(770.95,391.04) scale(1,1.1)" font-size="15" fill="#000000" text-anchor="middle" stroke="#4edc44" stroke-width="0.2">6</text>
<polygon points="757.10,423.50 761.00,412.00 780.90,412.00 784.80,423.50 780.90,435.00 761.00,435.00" fill="#55d795"/>
<text transform="translate(761.95,428.04) scale(1,1.1)" font-size="15" fill="#000000" stroke="#55d795" stroke-width="0.2"><tspan letter-spacing="-4.1" dx="-1.9" dy="-2.2">···</tspan></text>
<polygon points="757.10,447.50 761.00,436.00 780.90,436.00 784.80,447.50 780.90,459.00 761.00,459.00" fill="#4edc44"/>
<text transform="translate(761.95,452.94) scale(1,1.1)" font-size="15" fill="#000000" stroke="#4edc44" stroke-width="0.2"><tspan letter-spacing="-4.1" dx="-1.9" dy="-2.2">···</tspan></text>
<polygon points="786.80,385.50 790.70,374.00 867.70,374.00 871.60,385.50 867.70,397.00 790.70,397.00" fill="#4edc44"/>
<text transform="translate(829.20,391.04) scale(1,1.1)" font-size="15" fill="#000000" text-anchor="middle" stroke="#4edc44" stroke-width="0.2">7</text>
<polygon points="786.80,423.50 790.70,412.00 867.70,412.00 871.60,423.50 867.70,435.00 790.70,435.00" fill="#55d795"/>
<text transform="translate(829.20,428.04) scale(1,1.1)" font-size="15" fill="#000000" stroke="#55d795" stroke-width="0.2"><tspan x="-31.51">5</tspan><tspan font-family="'Liberation Sans',sans-serif" x="-22.17">0</tspan><tspan x="-13.50">.</tspan>1 µs</text>
<polygon points="786.80,447.50 790.70,436.00 867.70,436.00 871.60,447.50 867.70,459.00 790.70,459.00" fill="#4edc44"/>
<text transform="translate(793.20,452.94) scale(1,1.1)" font-size="15" fill="#000000" stroke="#4edc44" stroke-width="0.2">39.776<tspan letter-spacing="-4.1" dx="-1.9" dy="-2.2">···</tspan></text>
<polygon points="873.30,385.50 877.20,374.00 901.80,374.00 905.70,385.50 901.80,397.00 877.20,397.00" fill="#4edc44"/>
<text transform="translate(889.50,391.04) scale(1,1.1)" font-size="15" fill="#000000" text-anchor="middle" stroke="#4edc44" stroke-width="0.2">8</text>
<polygon points="873.30,423.50 877.20,412.00 901.80,412.00 905.70,423.50 901.80,435.00 877.20,435.00" fill="#55d795"/>
<text transform="translate(880.50,428.04) scale(1,1.1)" font-size="15" fill="#000000" stroke="#55d795" stroke-width="0.2"><tspan letter-spacing="-4.1" dx="-1.9" dy="-2.2">···</tspan></text>
<polygon points="873.30,447.50 877.20,436.00 901.80,436.00 905.70,447.50 901.80,459.00 877.20,459.00" fill="#4edc44"/>
<text transform="translate(880.50,452.94) scale(1,1.1)" font-size="15" fill="#000000" stroke="#4edc44" stroke-width="0.2"><tspan letter-spacing="-4.1" dx="-1.9" dy="-2.2">···</tspan></text>
<polygon points="907.90,385.50 911.80,374.00 967.00,374.00 970.90,385.50 967.00,397.00 911.80,397.00" fill="#4edc44"/>
<text transform="translate(939.40,391.04) scale(1,1.1)" font-size="15" fill="#000000" text-anchor="middle" stroke="#4edc44" stroke-width="0.2">9</text>
<polygon points="907.90,423.50 911.80,412.00 967.00,412.00 970.90,423.50 967.00,435.00 911.80,435.00" fill="#55d795"/>
<text transform="translate(912.40,428.04) scale(1,1.1)" font-size="15" fill="#000000" stroke="#55d795" stroke-width="0.2">37.8<tspan letter-spacing="-4.1" dx="-1.9" dy="-2.2">···</tspan></text>
<polygon points="907.90,447.50 911.80,436.00 967.00,436.00 970.90,447.50 967.00,459.00 911.80,459.00" fill="#4edc44"/>
<text transform="translate(912.40,452.94) scale(1,1.1)" font-size="15" fill="#000000" stroke="#4edc44" stroke-width="0.2">2<tspan font-family="'Liberation Sans',sans-serif" x="9.33">0</tspan><tspan x="18.00">.</tspan>2<tspan letter-spacing="-4.1" dx="-1.9" dy="-2.2">···</tspan></text>
<polygon points="973.40,385.50 977.30,374.00 1035.90,374.00 1039.80,385.50 1035.90,397.00 977.30,397.00" fill="#4edc44"/>
<text transform="translate(1006.60,391.04) scale(1,1.1)" font-size="15" fill="#000000" stroke="#4edc44" stroke-width="0.2"><tspan x="-9.00">1</tspan><tspan font-family="'Liberation Sans',sans-serif" x="0.33">0</tspan></text>
<polygon points="973.40,423.50 977.30,412.00 1035.90,412.00 1039.80,423.50 1035.90,435.00 977.30,435.00" fill="#55d795"/>
<text transform="translate(979.60,428.04) scale(1,1.1)" font-size="15" fill="#000000" stroke="#55d795" stroke-width="0.2">4<tspan font-family="'Liberation Sans',sans-serif" x="9.33">0</tspan><tspan x="18.00">.</tspan>1<tspan letter-spacing="-4.1" dx="-1.9" dy="-2.2">···</tspan></text>
<polygon points="973.40,447.50 977.30,436.00 1035.90,436.00 1039.80,447.50 1035.90,459.00 977.30,459.00" fill="#4edc44"/>
<text transform="translate(979.60,452.94) scale(1,1.1)" font-size="15" fill="#000000" stroke="#4edc44" stroke-width="0.2">49.8<tspan letter-spacing="-4.1" dx="-1.9" dy="-2.2">···</tspan></text>
<polygon points="1042.20,385.50 1046.10,374.00 1071.00,374.00 1074.90,385.50 1071.00,397.00 1046.10,397.00" fill="#4edc44"/>
<text transform="translate(1058.55,391.04) scale(1,1.1)" font-size="15" fill="#000000" text-anchor="middle" stroke="#4edc44" stroke-width="0.2">11</text>
<polygon points="1042.20,423.50 1046.10,412.00 1071.00,412.00 1074.90,423.50 1071.00,435.00 1046.10,435.00" fill="#55d795"/>
<text transform="translate(1049.55,428.04) scale(1,1.1)" font-size="15" fill="#000000" stroke="#55d795" stroke-width="0.2"><tspan letter-spacing="-4.1" dx="-1.9" dy="-2.2">···</tspan></text>
<polygon points="1042.20,447.50 1046.10,436.00 1071.00,436.00 1074.90,447.50 1071.00,459.00 1046.10,459.00" fill="#4edc44"/>
<text transform="translate(1049.55,452.94) scale(1,1.1)" font-size="15" fill="#000000" stroke="#4edc44" stroke-width="0.2"><tspan letter-spacing="-4.1" dx="-1.9" dy="-2.2">···</tspan></text>
<polygon points="1076.50,385.50 1080.40,374.00 1092.20,374.00 1096.10,385.50 1092.20,397.00 1080.40,397.00" fill="#4edc44"/>
<polygon points="1076.50,423.50 1080.40,412.00 1092.20,412.00 1096.10,423.50 1092.20,435.00 1080.40,435.00" fill="#55d795"/>
<polygon points="1076.50,447.50 1080.40,436.00 1092.20,436.00 1096.10,447.50 1092.20,459.00 1080.40,459.00" fill="#4edc44"/>
<polygon points="1097.80,385.50 1101.70,374.00 1122.70,374.00 1126.60,385.50 1122.70,397.00 1101.70,397.00" fill="#4edc44"/>
<text transform="translate(1112.20,391.04) scale(1,1.1)" font-size="15" fill="#000000" text-anchor="middle" stroke="#4edc44" stroke-width="0.2">13</text>
<polygon points="1097.80,423.50 1101.70,412.00 1122.70,412.00 1126.60,423.50 1122.70,435.00 1101.70,435.00" fill="#55d795"/>
<text transform="translate(1103.20,428.04) scale(1,1.1)" font-size="15" fill="#000000" stroke="#55d795" stroke-width="0.2"><tspan letter-spacing="-4.1" dx="-1.9" dy="-2.2">···</tspan></text>
<polygon points="1097.80,447.50 1101.70,436.00 1122.70,436.00 1126.60,447.50 1122.70,459.00 1101.70,459.00" fill="#4edc44"/>
<text transform="translate(1103.20,452.94) scale(1,1.1)" font-size="15" fill="#000000" stroke="#4edc44" stroke-width="0.2"><tspan letter-spacing="-4.1" dx="-1.9" dy="-2.2">···</tspan></text>
<polygon points="1128.60,385.50 1132.50,374.00 1191.90,374.00 1195.80,385.50 1191.90,397.00 1132.50,397.00" fill="#4edc44"/>
<text transform="translate(1162.20,391.04) scale(1,1.1)" font-size="15" fill="#000000" text-anchor="middle" stroke="#4edc44" stroke-width="0.2">14</text>
<polygon points="1128.60,423.50 1132.50,412.00 1191.90,412.00 1195.80,423.50 1191.90,435.00 1132.50,435.00" fill="#55d795"/>
<text transform="translate(1135.20,428.04) scale(1,1.1)" font-size="15" fill="#000000" stroke="#55d795" stroke-width="0.2">4<tspan font-family="'Liberation Sans',sans-serif" x="9.33">0</tspan><tspan x="18.00">.</tspan>1<tspan letter-spacing="-4.1" dx="-1.9" dy="-2.2">···</tspan></text>
<polygon points="1128.60,447.50 1132.50,436.00 1191.90,436.00 1195.80,447.50 1191.90,459.00 1132.50,459.00" fill="#4edc44"/>
<text transform="translate(1135.20,452.94) scale(1,1.1)" font-size="15" fill="#000000" stroke="#4edc44" stroke-width="0.2">74.7<tspan letter-spacing="-4.1" dx="-1.9" dy="-2.2">···</tspan></text>
<polygon points="1197.40,385.50 1201.30,374.00 1234.40,374.00 1238.30,385.50 1234.40,397.00 1201.30,397.00" fill="#4edc44"/>
<text transform="translate(1217.85,391.04) scale(1,1.1)" font-size="15" fill="#000000" text-anchor="middle" stroke="#4edc44" stroke-width="0.2">15</text>
<polygon points="1197.40,423.50 1201.30,412.00 1234.40,412.00 1238.30,423.50 1234.40,435.00 1201.30,435.00" fill="#55d795"/>
<text transform="translate(1204.35,428.04) scale(1,1.1)" font-size="15" fill="#000000" stroke="#55d795" stroke-width="0.2">4<tspan letter-spacing="-4.1" dx="-1.9" dy="-2.2">···</tspan></text>
<polygon points="1197.40,447.50 1201.30,436.00 1234.40,436.00 1238.30,447.50 1234.40,459.00 1201.30,459.00" fill="#4edc44"/>
<text transform="translate(1204.35,452.94) scale(1,1.1)" font-size="15" fill="#000000" stroke="#4edc44" stroke-width="0.2">8<tspan letter-spacing="-4.1" dx="-1.9" dy="-2.2">···</tspan></text>
</g>
<g id="signals">
<line x1="209.00" y1="485.50" x2="1239.60" y2="485.50" stroke="#909090" stroke-width="1" stroke-dasharray="1 2.4"/>
<line x1="209.00" y1="523.50" x2="1239.60" y2="523.50" stroke="#909090" stroke-width="1" stroke-dasharray="1 2.4"/>
<line x1="209.00" y1="561.50" x2="1239.60" y2="561.50" stroke="#909090" stroke-width="1" stroke-dasharray="1 2.4"/>
<line x1="209.00" y1="599.50" x2="1239.60" y2="599.50" stroke="#909090" stroke-width="1" stroke-dasharray="1 2.4"/>
<line x1="209.00" y1="637.50" x2="1239.60" y2="637.50" stroke="#909090" stroke-width="1" stroke-dasharray="1 2.4"/>
<line x1="209.00" y1="675.50" x2="1239.60" y2="675.50" stroke="#909090" stroke-width="1" stroke-dasharray="1 2.4"/>
<path d="M209.0,473.5 H281.5 V497.5 H291.5 V473.5 H430.5 V497.5 H448.5 V473.5 H483.5 V497.5 H535.5 V473.5 H552.5 V497.5 H600.5 V473.5 H604.5 V497.5 H707.5 V473.5 H725.5 V497.5 H755.5 V473.5 H771.5 V497.5 H785.5 V473.5 H820.5 V497.5 H872.5 V473.5 H889.5 V497.5 H906.5 V473.5 H919.5 V497.5 H971.5 V473.5 H1006.5 V497.5 H1040.5 V473.5 H1058.5 V497.5 H1075.5 V473.5 H1079.5 V497.5 H1096.5 V473.5 H1109.5 V497.5 H1127.5 V473.5 H1179.5 V497.5 H1196.5 V473.5 H1239.6" fill="none" stroke="#e2e2e2" stroke-width="1" shape-rendering="crispEdges"/>
<path d="M209.0,511.5 H216.5 V535.5 H225.5 V511.5 H234.5 V535.5 H242.5 V511.5 H251.5 V535.5 H260.5 V511.5 H268.5 V535.5 H283.5 V511.5 H444.5 V535.5 H453.5 V511.5 H461.5 V535.5 H470.5 V511.5 H479.5 V535.5 H487.5 V511.5 H496.5 V535.5 H505.5 V511.5 H513.5 V535.5 H522.5 V511.5 H531.5 V535.5 H539.5 V511.5 H548.5 V535.5 H557.5 V511.5 H565.5 V535.5 H574.5 V511.5 H582.5 V535.5 H591.5 V511.5 H600.5 V535.5 H608.5 V511.5 H617.5 V535.5 H626.5 V511.5 H634.5 V535.5 H643.5 V511.5 H651.5 V535.5 H660.5 V511.5 H669.5 V535.5 H678.5 V511.5 H686.5 V535.5 H695.5 V511.5 H703.5 V535.5 H712.5 V511.5 H721.5 V535.5 H729.5 V511.5 H738.5 V535.5 H747.5 V511.5 H755.5 V535.5 H764.5 V511.5 H781.5 V535.5 H790.5 V511.5 H798.5 V535.5 H807.5 V511.5 H815.5 V535.5 H824.5 V511.5 H833.5 V535.5 H842.5 V511.5 H850.5 V535.5 H859.5 V511.5 H867.5 V535.5 H876.5 V511.5 H885.5 V535.5 H893.5 V511.5 H902.5 V535.5 H911.5 V511.5 H919.5 V535.5 H928.5 V511.5 H936.5 V535.5 H945.5 V511.5 H954.5 V535.5 H963.5 V511.5 H971.5 V535.5 H980.5 V511.5 H988.5 V535.5 H997.5 V511.5 H1005.5 V535.5 H1014.5 V511.5 H1023.5 V535.5 H1032.5 V511.5 H1040.5 V535.5 H1049.5 V511.5 H1057.5 V535.5 H1066.5 V511.5 H1075.5 V535.5 H1083.5 V511.5 H1092.5 V535.5 H1101.5 V511.5 H1109.5 V535.5 H1118.5 V511.5 H1126.5 V535.5 H1135.5 V511.5 H1144.5 V535.5 H1153.5 V511.5 H1161.5 V535.5 H1170.5 V511.5 H1178.5 V535.5 H1187.5 V511.5 H1196.5 V535.5 H1204.5 V511.5 H1213.5 V535.5 H1222.5 V511.5 H1230.5 V535.5 H1239.5 V511.5 H1239.6" fill="none" stroke="#e2e2e2" stroke-width="1" shape-rendering="crispEdges"/>
<line x1="209.00" y1="573.50" x2="1239.60" y2="573.50" stroke="#e2e2e2" stroke-width="1" shape-rendering="crispEdges"/>
<line x1="209.00" y1="587.50" x2="1239.60" y2="587.50" stroke="#e2e2e2" stroke-width="1" shape-rendering="crispEdges"/>
<line x1="209.00" y1="649.50" x2="1239.60" y2="649.50" stroke="#e2e2e2" stroke-width="1" shape-rendering="crispEdges"/>
<line x1="209.00" y1="687.50" x2="1239.60" y2="687.50" stroke="#e2e2e2" stroke-width="1" shape-rendering="crispEdges"/>
</g>
<g id="cursors">
<line x1="369.50" y1="138.00" x2="369.50" y2="698.00" stroke="#1c9c82" stroke-width="1" stroke-dasharray="4 2"/>
<rect x="321.00" y="104.00" width="97.00" height="22.80" fill="#19bd9b" fill-opacity="0.784"/>
<path d="M359.5,126.7 L379.5,126.7 L369.5,137.5 Z" fill="#19bd9b" fill-opacity="0.784"/>
<text transform="translate(369.50,120.03) scale(1,1.1)" font-size="13.33" fill="#000000" text-anchor="middle" stroke="#1c9c82" stroke-width="0.2">+19.653716s</text>
<text transform="translate(369.50,134.55) scale(1,1)" font-size="12" fill="#000000" text-anchor="middle" stroke="#1c9c82" stroke-width="0.2">1</text>
<line x1="1127.30" y1="138.00" x2="1127.30" y2="698.00" stroke="#814e96" stroke-width="1" stroke-dasharray="4 2"/>
<rect x="1071.30" y="104.00" width="112.00" height="22.80" fill="#9a59b5" fill-opacity="0.784"/>
<path d="M1117.3,126.7 L1137.3,126.7 L1127.3,137.5 Z" fill="#9a59b5" fill-opacity="0.784"/>
<text transform="translate(1127.30,120.03) scale(1,1.1)" font-size="13.33" fill="#000000" text-anchor="middle" stroke="#814e96" stroke-width="0.2">+19.65415584s</text>
<text transform="translate(1127.30,134.55) scale(1,1)" font-size="12" fill="#000000" text-anchor="middle" stroke="#814e96" stroke-width="0.2">4</text>
<rect x="1172.30" y="104.00" width="9.40" height="10.00" fill="#f2b01e"/>
<path d="M1174.3,106.3 L1179.7,111.7 M1179.7,106.3 L1174.3,111.7" fill="none" stroke="#000" stroke-width="1.1"/>
<line x1="755.40" y1="138.00" x2="755.40" y2="698.00" stroke="#327fb5" stroke-width="1" stroke-dasharray="4 2"/>
<rect x="699.40" y="104.00" width="112.00" height="22.80" fill="#3598dc" fill-opacity="0.784"/>
<path d="M745.4,126.7 L765.4,126.7 L755.4,137.5 Z" fill="#3598dc" fill-opacity="0.784"/>
<text transform="translate(755.40,120.03) scale(1,1.1)" font-size="13.33" fill="#000000" stroke="#327fb5" stroke-width="0.2"><tspan x="-52.00">+</tspan>19.65394<tspan font-family="'Liberation Sans',sans-serif" x="20.29">0</tspan><tspan x="28.00">3</tspan>6s</text>
<text transform="translate(755.40,134.55) scale(1,1)" font-size="12" fill="#000000" text-anchor="middle" stroke="#327fb5" stroke-width="0.2">3</text>
<rect x="800.40" y="104.00" width="9.40" height="10.00" fill="#f2b01e"/>
<path d="M802.4,106.3 L807.8,111.7 M807.8,106.3 L802.4,111.7" fill="none" stroke="#000" stroke-width="1.1"/>
<line x1="453.40" y1="138.00" x2="453.40" y2="698.00" stroke="#1185d1" stroke-width="1" stroke-dasharray="4 2"/>
<rect x="397.40" y="104.00" width="112.00" height="22.80" fill="#1185d1" fill-opacity="1"/>
<path d="M443.4,126.7 L463.4,126.7 L453.4,137.5 Z" fill="#1185d1" fill-opacity="1"/>
<text transform="translate(453.40,120.03) scale(1,1.1)" font-size="13.33" fill="#ffffff" text-anchor="middle" stroke="#1185d1" stroke-width="0.2">+19.65376472s</text>
<text transform="translate(453.40,134.55) scale(1,1)" font-size="12" fill="#ffffff" text-anchor="middle" stroke="#1185d1" stroke-width="0.2">S</text>
<path d="M364.6,147.5 L374.4,147.5 L369.5,152.5 Z" fill="#1185d1"/>
<path d="M364.6,282 L374.4,282 L369.5,287 Z" fill="#1185d1"/>
<path d="M364.6,368 L374.4,368 L369.5,373 Z" fill="#1185d1"/>
<path d="M364.6,405.5 L374.4,405.5 L369.5,410.5 Z" fill="#1185d1"/>
<path d="M814.8,135 L822.6,135 L818.7,139 Z" fill="#f0f0f0"/>
</g>
<g id="measure-overlay">
<rect x="818.00" y="527.00" width="180.50" height="79.50" fill="#1185d1" fill-opacity="0.8"/>
<text transform="translate(998.00,543.14) scale(1,1.1)" font-size="15" fill="#e8a820" stroke="#1572af" stroke-width="0.2"><tspan x="-126.02">W</tspan>idth: +5.<tspan font-family="'Liberation Sans',sans-serif" x="-35.68">0</tspan><tspan x="-27.00">8</tspan>µs</text>
<text transform="translate(998.00,563.44) scale(1,1.1)" font-size="15" fill="#e8a820" stroke="#1572af" stroke-width="0.2"><tspan x="-117.02">P</tspan>eriod: +1<tspan font-family="'Liberation Sans',sans-serif" x="-26.67">0</tspan><tspan x="-18.00">µ</tspan>s</text>
<text transform="translate(998.00,583.74) scale(1,1.1)" font-size="15" fill="#e8a820" stroke="#1572af" stroke-width="0.2"><tspan x="-180.03">F</tspan>requency: 1<tspan font-family="'Liberation Sans',sans-serif" x="-71.68">0</tspan><tspan font-family="'Liberation Sans',sans-serif" x="-62.68">0</tspan><tspan x="-54.01">.</tspan><tspan font-family="'Liberation Sans',sans-serif" x="-44.68">0</tspan><tspan font-family="'Liberation Sans',sans-serif" x="-35.68">0</tspan><tspan x="-27.00">K</tspan>Hz</text>
<text transform="translate(998.00,604.04) scale(1,1.1)" font-size="15" fill="#e8a820" stroke="#1572af" stroke-width="0.2"><tspan x="-162.03">D</tspan>uty Cycle: 5<tspan font-family="'Liberation Sans',sans-serif" x="-44.68">0</tspan><tspan x="-36.01">.</tspan>8<tspan font-family="'Liberation Sans',sans-serif" x="-17.67">0</tspan><tspan x="-9.00">%</tspan></text>
<path d="M815.8,523.5 H833.4 M824.5,520.5 V526.5 M818,521.5 L815.8,523.5 L818,525.5 M822.3,521.5 L824.4,523.5 L822.3,525.5 M826.7,521.5 L824.6,523.5 L826.7,525.5 M831.2,521.5 L833.4,523.5 L831.2,525.5" fill="none" stroke="#f0a818" stroke-width="1"/>
</g>
<text transform="translate(1080.40,714.15) scale(1,1.08)" font-size="14.2" fill="#c8c8c8" text-anchor="end" font-family="'Noto Serif CJK SC','Noto Sans CJK SC',serif" letter-spacing="0.8">触发时间</text>
<text transform="translate(1240.20,713.84) scale(1,1.08)" font-size="13.33" fill="#c8c8c8"><tspan x="-159.99">:</tspan>2<tspan font-family="'Liberation Sans',sans-serif" x="-143.69">0</tspan><tspan x="-135.99">2</tspan><tspan font-family="'Liberation Sans',sans-serif" x="-127.70">0</tspan><tspan x="-119.99">-</tspan><tspan font-family="'Liberation Sans',sans-serif" x="-111.70">0</tspan><tspan x="-103.99">2</tspan>-15 18:<tspan font-family="'Liberation Sans',sans-serif" x="-39.70">0</tspan><tspan x="-32.00">7</tspan>:34</text>
</g>
<g id="bottom">
<rect x="17.00" y="721.00" width="1210.00" height="6.00" fill="#1e1e1e" rx="3"/>
<rect x="153.00" y="721.00" width="20.00" height="6.00" fill="#6b6b6b" rx="3"/>
<path d="M15,720 L11,724.2 L15,728.4" fill="none" stroke="#cfcfcf" stroke-width="1"/>
<path d="M1230,720 L1234.2,724.2 L1230,728.4" fill="none" stroke="#cfcfcf" stroke-width="1"/>
<line x1="5.00" y1="731.50" x2="1570.00" y2="731.50" stroke="#414141" stroke-width="1"/>
<rect x="696.80" y="743.30" width="34.70" height="31.30" fill="#232323" rx="5.5" stroke="#171717" stroke-width="1.2"/>
<path d="M719.3,750.3 L709.2,759 L719.3,767.7" fill="none" stroke="#f4f4f4" stroke-width="2.4" stroke-linejoin="miter" stroke-linecap="round"/>
<rect x="844.60" y="743.30" width="34.70" height="31.30" fill="#232323" rx="5.5" stroke="#171717" stroke-width="1.2"/>
<path d="M857.2,750.3 L867.3,759 L857.2,767.7" fill="none" stroke="#f4f4f4" stroke-width="2.4" stroke-linejoin="miter" stroke-linecap="round"/>
<rect x="739.50" y="747.50" width="97.00" height="22.00" fill="#232323" rx="3" stroke="#3a3a3a" stroke-width="1"/>
<rect x="739.50" y="747.50" width="28.50" height="22.00" fill="#2a2a2a" rx="3" stroke="#3a3a3a" stroke-width="1"/>
<circle cx="751.8" cy="757" r="4.3" fill="none" stroke="#7a7a7a" stroke-width="1.6"/>
<line x1="755.00" y1="760.20" x2="761.20" y2="766.00" stroke="#7a7a7a" stroke-width="1.9"/>
<text transform="translate(773.60,764.22) scale(1,1.12)" font-size="13.33" fill="#f0f0f0" stroke="#232323" stroke-width="0.2">XRXXXX</text>
</g>
<g id="dock">
<rect x="1240.00" y="90.00" width="3.30" height="641.00" fill="#2b2b2b"/>
<rect x="1243.50" y="90.50" width="326.00" height="30.00" fill="#242424" stroke="#1d1d1d" stroke-width="1"/>
<text transform="translate(1248.00,112.32) scale(1,1.12)" font-size="13.33" fill="#f0f0f0" stroke="#262626" stroke-width="0.2">Measurement</text>
<rect x="1561.00" y="134.00" width="6.00" height="572.00" fill="#1e1e1e" rx="3"/>
<rect x="1561.00" y="135.50" width="6.00" height="168.00" fill="#505050" rx="3"/>
<path d="M1559.7,132.7 L1564,128.5 L1568.3,132.7" fill="none" stroke="#cfcfcf" stroke-width="1"/>
<path d="M1559.7,707.7 L1564,712 L1568.3,707.7" fill="none" stroke="#cfcfcf" stroke-width="1"/>
<rect x="1255.00" y="721.00" width="291.00" height="6.00" fill="#1e1e1e" rx="3"/>
<rect x="1255.00" y="721.00" width="282.00" height="6.00" fill="#626262" rx="3"/>
<path d="M1252.5,720 L1248.5,724.2 L1252.5,728.4" fill="none" stroke="#cfcfcf" stroke-width="1"/>
<path d="M1548,720 L1552.2,724.2 L1548,728.4" fill="none" stroke="#cfcfcf" stroke-width="1"/>
<path d="M1327.5,154.4 H1257.5 Q1254.5,154.4 1254.5,157.4 V238.4 Q1254.5,241.4 1257.5,241.4 H1552.5 Q1555.5,241.4 1555.5,238.4 V157.4 Q1555.5,154.4 1552.5,154.4 H1491" fill="none" stroke="#3c3c3c" stroke-width="1"/>
<text transform="translate(1409.25,157.22) scale(1,1.12)" font-size="13.33" fill="#ececec" text-anchor="middle" stroke="#262626" stroke-width="0.2">Mouse measurement</text>
<rect x="1268.50" y="168.70" width="13.20" height="13.20" fill="none" stroke="#f0f0f0" stroke-width="1"/>
<rect x="1270.60" y="170.80" width="9.00" height="9.00" fill="#1685d1"/>
<text transform="translate(1283.60,181.02) scale(1,1.12)" font-size="13.33" fill="#ececec" stroke="#262626" stroke-width="0.2">Enable floating measurement</text>
<text transform="translate(1271.90,205.12) scale(1,1.12)" font-size="13.33" fill="#ececec" stroke="#262626" stroke-width="0.2">W:</text>
<text transform="translate(1315.50,205.12) scale(1,1.12)" font-size="13.33" fill="#ececec" stroke="#262626" stroke-width="0.2">+5.<tspan font-family="'Liberation Sans',sans-serif" x="24.29">0</tspan><tspan x="32.00">8</tspan>µs</text>
<text transform="translate(1403.80,205.12) scale(1,1.12)" font-size="13.33" fill="#ececec" stroke="#262626" stroke-width="0.2">P:</text>
<text transform="translate(1447.40,205.12) scale(1,1.12)" font-size="13.33" fill="#ececec" stroke="#262626" stroke-width="0.2">+1<tspan font-family="'Liberation Sans',sans-serif" x="16.29">0</tspan><tspan x="24.00">µ</tspan>s</text>
<text transform="translate(1271.90,226.82) scale(1,1.12)" font-size="13.33" fill="#ececec" stroke="#262626" stroke-width="0.2">D:</text>
<text transform="translate(1315.50,226.82) scale(1,1.12)" font-size="13.33" fill="#ececec" stroke="#262626" stroke-width="0.2">5<tspan font-family="'Liberation Sans',sans-serif" x="8.29">0</tspan><tspan x="16.00">.</tspan>8<tspan font-family="'Liberation Sans',sans-serif" x="32.29">0</tspan><tspan x="40.00">%</tspan></text>
<text transform="translate(1403.80,226.82) scale(1,1.12)" font-size="13.33" fill="#ececec" stroke="#262626" stroke-width="0.2">F:</text>
<text transform="translate(1447.40,226.82) scale(1,1.12)" font-size="13.33" fill="#ececec" stroke="#262626" stroke-width="0.2">1<tspan font-family="'Liberation Sans',sans-serif" x="8.29">0</tspan><tspan font-family="'Liberation Sans',sans-serif" x="16.29">0</tspan><tspan x="24.00">.</tspan><tspan font-family="'Liberation Sans',sans-serif" x="32.29">0</tspan><tspan font-family="'Liberation Sans',sans-serif" x="40.29">0</tspan><tspan x="48.00">K</tspan>Hz</text>
<path d="M1334.6,269.6 H1257.5 Q1254.5,269.6 1254.5,272.6 V374.2 Q1254.5,377.2 1257.5,377.2 H1552.5 Q1555.5,377.2 1555.5,374.2 V272.6 Q1555.5,269.6 1552.5,269.6 H1483" fill="none" stroke="#3c3c3c" stroke-width="1"/>
<text transform="translate(1408.80,272.42) scale(1,1.12)" font-size="13.33" fill="#ececec" text-anchor="middle" stroke="#262626" stroke-width="0.2">Cursor Distance</text>
<path d="M1270.8,292.2 H1287.2 M1279,284.0 V300.4" fill="none" stroke="#e0e0e0" stroke-width="4"/>
<text transform="translate(1401.30,299.12) scale(1,1.12)" font-size="13.33" fill="#ececec" text-anchor="middle" stroke="#262626" stroke-width="0.2">Time/Samples</text>
<path d="M1273.5,317.59999999999997 L1284.1,328.2 M1284.1,317.59999999999997 L1273.5,328.2" fill="none" stroke="#e0e0e0" stroke-width="3.4"/>
<rect x="1298.00" y="311.00" width="18.00" height="24.80" fill="#3598dc" rx="4.5"/>
<text transform="translate(1307.00,329.12) scale(1,1.12)" font-size="13.33" fill="#000000" text-anchor="middle" stroke="#3598dc" stroke-width="0.2">3</text>
<text transform="translate(1325.60,328.72) scale(1,1.12)" font-size="13.33" fill="#ececec" text-anchor="middle" stroke="#262626" stroke-width="0.2">-</text>
<rect x="1336.20" y="311.00" width="18.00" height="24.80" fill="#2ecd71" rx="4.5"/>
<text transform="translate(1345.20,329.12) scale(1,1.12)" font-size="13.33" fill="#000000" text-anchor="middle" stroke="#2ecd71" stroke-width="0.2">2</text>
<text transform="translate(1364.40,328.72) scale(1,1.12)" font-size="13.33" fill="#ececec" stroke="#262626" stroke-width="0.2">-2.49344ms/-62336</text>
<path d="M1273.5,347.59999999999997 L1284.1,358.2 M1284.1,347.59999999999997 L1273.5,358.2" fill="none" stroke="#e0e0e0" stroke-width="3.4"/>
<rect x="1298.00" y="341.00" width="18.00" height="24.80" fill="#2ecd71" rx="4.5"/>
<text transform="translate(1307.00,359.12) scale(1,1.12)" font-size="13.33" fill="#000000" text-anchor="middle" stroke="#2ecd71" stroke-width="0.2">2</text>
<text transform="translate(1325.60,358.72) scale(1,1.12)" font-size="13.33" fill="#ececec" text-anchor="middle" stroke="#262626" stroke-width="0.2">-</text>
<rect x="1336.20" y="341.00" width="18.00" height="24.80" fill="#19bd9b" rx="4.5"/>
<text transform="translate(1345.20,359.12) scale(1,1.12)" font-size="13.33" fill="#000000" text-anchor="middle" stroke="#19bd9b" stroke-width="0.2">1</text>
<text transform="translate(1364.40,358.72) scale(1,1.12)" font-size="13.33" fill="#ececec" stroke="#262626" stroke-width="0.2">+2.7178ms/67945</text>
<path d="M1375,405.5 H1257.5 Q1254.5,405.5 1254.5,408.5 V510 Q1254.5,513 1257.5,513 H1552.5 Q1555.5,513 1555.5,510 V408.5 Q1555.5,405.5 1552.5,405.5 H1443" fill="none" stroke="#3c3c3c" stroke-width="1"/>
<text transform="translate(1409.00,408.32) scale(1,1.12)" font-size="13.33" fill="#ececec" text-anchor="middle" stroke="#262626" stroke-width="0.2">Edges</text>
<path d="M1270.8,428.3 H1287.2 M1279,420.1 V436.5" fill="none" stroke="#e0e0e0" stroke-width="4"/>
<text transform="translate(1324.40,434.92) scale(1,1.12)" font-size="13.33" fill="#ececec" stroke="#262626" stroke-width="0.2">Channel</text>
<text transform="translate(1399.50,434.92) scale(1,1.12)" font-size="13.33" fill="#ececec" stroke="#262626" stroke-width="0.2">Rising/Falling/Edg</text>
<path d="M1273.5,453.7 L1284.1,464.3 M1284.1,453.7 L1273.5,464.3" fill="none" stroke="#e0e0e0" stroke-width="3.4"/>
<rect x="1298.00" y="447.10" width="18.00" height="24.80" fill="#19bd9b" rx="4.5"/>
<text transform="translate(1307.00,465.22) scale(1,1.12)" font-size="13.33" fill="#000000" text-anchor="middle" stroke="#19bd9b" stroke-width="0.2">1</text>
<text transform="translate(1325.60,464.82) scale(1,1.12)" font-size="13.33" fill="#ececec" text-anchor="middle" stroke="#262626" stroke-width="0.2">-</text>
<rect x="1336.20" y="447.10" width="18.00" height="24.80" fill="#2ecd71" rx="4.5"/>
<text transform="translate(1345.20,465.22) scale(1,1.12)" font-size="13.33" fill="#000000" text-anchor="middle" stroke="#2ecd71" stroke-width="0.2">2</text>
<text transform="translate(1363.80,464.82) scale(1,1.12)" font-size="13.33" fill="#ececec" text-anchor="middle" stroke="#262626" stroke-width="0.2">@</text>
<rect x="1374.50" y="448.30" width="47.00" height="22.40" fill="#1f1f1f" rx="3" stroke="#3a3a3a" stroke-width="1"/>
<text transform="translate(1377.80,464.82) scale(1,1.12)" font-size="13.33" fill="#ececec" stroke="#1f1f1f" stroke-width="0.2"><tspan font-family="'Liberation Sans',sans-serif" x="0.29">0</tspan></text>
<path d="M1412.75,457.20 L1416.50,461.20 L1420.25,457.20" fill="none" stroke="#bdbdbd" stroke-width="1.2"/>
<text transform="translate(1433.10,464.82) scale(1,1.12)" font-size="13.33" fill="#ececec" stroke="#262626" stroke-width="0.2">66/66/132</text>
<path d="M1273.5,483.7 L1284.1,494.3 M1284.1,483.7 L1273.5,494.3" fill="none" stroke="#e0e0e0" stroke-width="3.4"/>
<rect x="1298.00" y="477.10" width="18.00" height="24.80" fill="#19bd9b" rx="4.5"/>
<text transform="translate(1307.00,495.22) scale(1,1.12)" font-size="13.33" fill="#000000" text-anchor="middle" stroke="#19bd9b" stroke-width="0.2">1</text>
<text transform="translate(1325.60,494.82) scale(1,1.12)" font-size="13.33" fill="#ececec" text-anchor="middle" stroke="#262626" stroke-width="0.2">-</text>
<rect x="1336.20" y="477.10" width="18.00" height="24.80" fill="#9a59b5" rx="4.5"/>
<text transform="translate(1345.20,495.22) scale(1,1.12)" font-size="13.33" fill="#000000" text-anchor="middle" stroke="#9a59b5" stroke-width="0.2">4</text>
<text transform="translate(1363.80,494.82) scale(1,1.12)" font-size="13.33" fill="#ececec" text-anchor="middle" stroke="#262626" stroke-width="0.2">@</text>
<rect x="1374.50" y="478.30" width="47.00" height="22.40" fill="#1f1f1f" rx="3" stroke="#3a3a3a" stroke-width="1"/>
<text transform="translate(1377.80,494.82) scale(1,1.12)" font-size="13.33" fill="#ececec" stroke="#1f1f1f" stroke-width="0.2">1</text>
<path d="M1412.75,487.20 L1416.50,491.20 L1420.25,487.20" fill="none" stroke="#bdbdbd" stroke-width="1.2"/>
<text transform="translate(1433.10,494.82) scale(1,1.12)" font-size="13.33" fill="#ececec" stroke="#262626" stroke-width="0.2">39/4<tspan font-family="'Liberation Sans',sans-serif" x="32.29">0</tspan><tspan x="40.00">/</tspan>79</text>
<path d="M1367.2,541.6 H1257.5 Q1254.5,541.6 1254.5,544.6 V706.2 Q1254.5,709.2 1257.5,709.2 H1552.5 Q1555.5,709.2 1555.5,706.2 V544.6 Q1555.5,541.6 1552.5,541.6 H1450.6" fill="none" stroke="#3c3c3c" stroke-width="1"/>
<text transform="translate(1408.90,544.42) scale(1,1.12)" font-size="13.33" fill="#ececec" text-anchor="middle" stroke="#262626" stroke-width="0.2">Cursors</text>
<text transform="translate(1378.40,567.22) scale(1,1.12)" font-size="13.33" fill="#ececec" text-anchor="middle" stroke="#262626" stroke-width="0.2">Time/Samples</text>
<path d="M1273.5,583.2 L1284.1,593.8 M1284.1,583.2 L1273.5,593.8" fill="none" stroke="#e0e0e0" stroke-width="3.4"/>
<rect x="1300.00" y="577.00" width="18.00" height="24.80" fill="#19bd9b" rx="4.5"/>
<text transform="translate(1309.00,595.12) scale(1,1.12)" font-size="13.33" fill="#000000" text-anchor="middle" stroke="#19bd9b" stroke-width="0.2">1</text>
<text transform="translate(1331.50,594.92) scale(1,1.12)" font-size="13.33" fill="#ececec" stroke="#262626" stroke-width="0.2">+19.653716s/4913429<tspan font-family="'Liberation Sans',sans-serif" x="152.28">0</tspan><tspan font-family="'Liberation Sans',sans-serif" x="160.28">0</tspan></text>
<path d="M1273.5,615.1 L1284.1,625.6999999999999 M1284.1,615.1 L1273.5,625.6999999999999" fill="none" stroke="#e0e0e0" stroke-width="3.4"/>
<rect x="1300.00" y="608.90" width="18.00" height="24.80" fill="#2ecd71" rx="4.5"/>
<text transform="translate(1309.00,627.02) scale(1,1.12)" font-size="13.33" fill="#000000" text-anchor="middle" stroke="#2ecd71" stroke-width="0.2">2</text>
<text transform="translate(1331.50,626.82) scale(1,1.12)" font-size="13.33" fill="#ececec" stroke="#262626" stroke-width="0.2">+19.6564338s/49141<tspan font-family="'Liberation Sans',sans-serif" x="144.28">0</tspan><tspan x="151.99">8</tspan>45</text>
<path d="M1273.5,647.0 L1284.1,657.5999999999999 M1284.1,647.0 L1273.5,657.5999999999999" fill="none" stroke="#e0e0e0" stroke-width="3.4"/>
<rect x="1300.00" y="640.80" width="18.00" height="24.80" fill="#3598dc" rx="4.5"/>
<text transform="translate(1309.00,658.92) scale(1,1.12)" font-size="13.33" fill="#000000" text-anchor="middle" stroke="#3598dc" stroke-width="0.2">3</text>
<text transform="translate(1331.50,658.72) scale(1,1.12)" font-size="13.33" fill="#ececec" stroke="#262626" stroke-width="0.2">+19.65394<tspan font-family="'Liberation Sans',sans-serif" x="72.29">0</tspan><tspan x="79.99">3</tspan>6s/4913485<tspan font-family="'Liberation Sans',sans-serif" x="168.28">0</tspan><tspan x="175.98">9</tspan></text>
<path d="M1273.5,678.9 L1284.1,689.4999999999999 M1284.1,678.9 L1273.5,689.4999999999999" fill="none" stroke="#e0e0e0" stroke-width="3.4"/>
<rect x="1300.00" y="672.70" width="18.00" height="24.80" fill="#9a59b5" rx="4.5"/>
<text transform="translate(1309.00,690.82) scale(1,1.12)" font-size="13.33" fill="#000000" text-anchor="middle" stroke="#9a59b5" stroke-width="0.2">4</text>
<text transform="translate(1331.50,690.62) scale(1,1.12)" font-size="13.33" fill="#ececec" stroke="#262626" stroke-width="0.2">+19.65415584s/491353896</text>
</g>
</svg>
</body>
</html>
